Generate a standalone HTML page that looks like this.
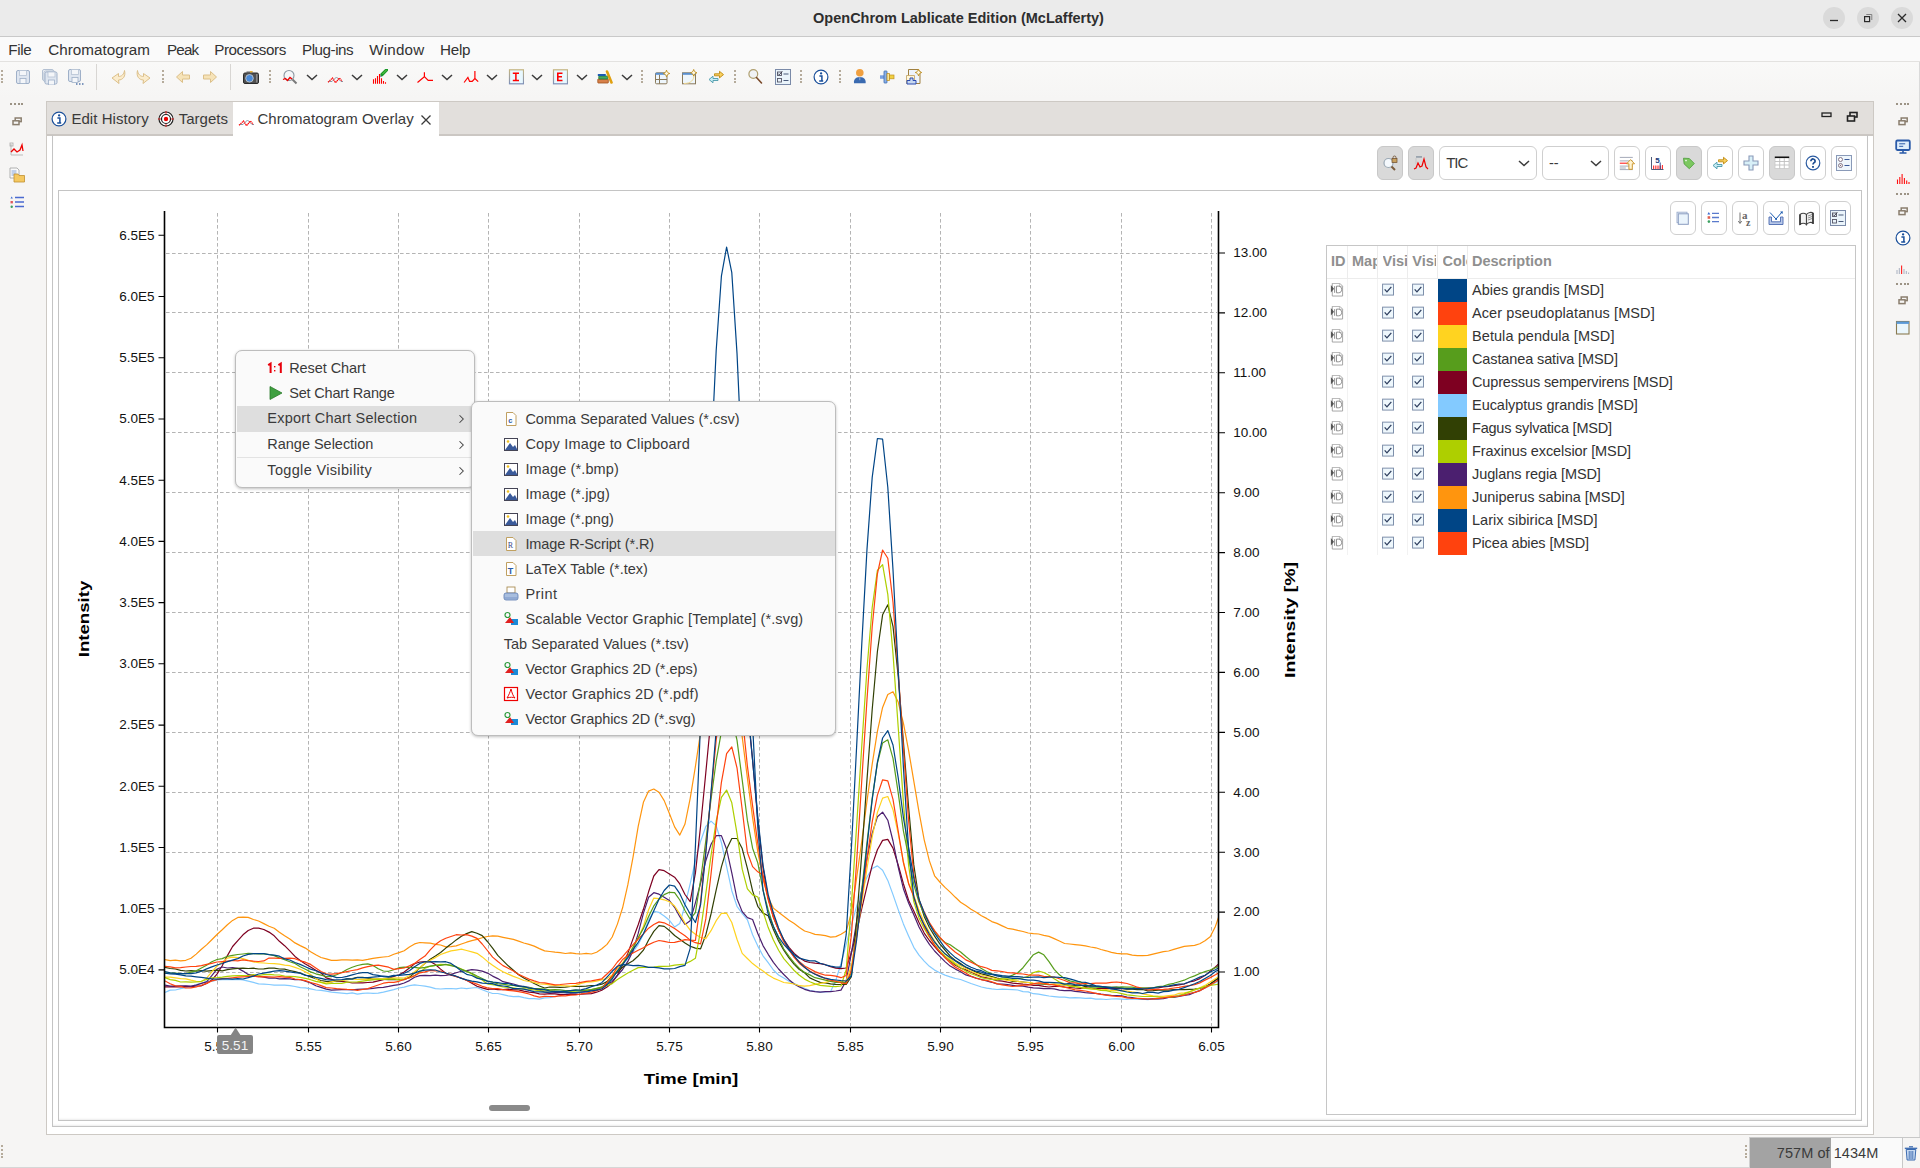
<!DOCTYPE html>
<html><head><meta charset="utf-8"><title>OpenChrom</title>
<style>
html,body{margin:0;padding:0}
body{width:1920px;height:1168px;position:relative;overflow:hidden;background:#f6f5f4;font-family:"Liberation Sans", sans-serif}
.t{position:absolute;white-space:pre}
</style></head><body>
<div style="position:absolute;left:0px;top:0px;width:1920px;height:36px;background:#ebebeb"></div><div style="position:absolute;left:0px;top:36px;width:1920px;height:1px;background:#c9c9c9"></div><div class="t" style="left:658.5px;width:600px;text-align:center;top:8.77px;font-size:14.5px;line-height:19px;color:#2e2e2e;font-weight:700;">OpenChrom Lablicate Edition (McLafferty)</div><div style="position:absolute;left:1823px;top:7px;width:22px;height:22px;background:#dadada;border-radius:50%"></div><div style="position:absolute;left:1857px;top:7px;width:22px;height:22px;background:#dadada;border-radius:50%"></div><div style="position:absolute;left:1891px;top:7px;width:22px;height:22px;background:#dadada;border-radius:50%"></div><svg style="position:absolute;left:1823px;top:7px" width="90" height="22" viewBox="1823 7 90 22"><path d="M1830 20.5h8" stroke="#2a2a2a" stroke-width="1.3"/><rect x="1864.6" y="16.6" width="5" height="5" fill="none" stroke="#2a2a2a" stroke-width="1.2"/><path d="M1866.3 14.5h5.5v5.5" fill="none" stroke="#777" stroke-width="0.9"/><path d="M1898 14l8 8M1906 14l-8 8" stroke="#2a2a2a" stroke-width="1.3"/></svg><div style="position:absolute;left:0px;top:37px;width:1920px;height:24px;background:#fafafa"></div><div style="position:absolute;left:0px;top:61px;width:1920px;height:1px;background:#e3e2e0"></div><div class="t" style="left:8.3px;top:40.23px;font-size:15.2px;line-height:20px;color:#333333;font-weight:400;letter-spacing:-0.323px;">File</div><div class="t" style="left:48.2px;top:40.23px;font-size:15.2px;line-height:20px;color:#333333;font-weight:400;letter-spacing:0.036px;">Chromatogram</div><div class="t" style="left:167px;top:40.23px;font-size:15.2px;line-height:20px;color:#333333;font-weight:400;letter-spacing:-0.836px;">Peak</div><div class="t" style="left:214.2px;top:40.23px;font-size:15.2px;line-height:20px;color:#333333;font-weight:400;letter-spacing:-0.432px;">Processors</div><div class="t" style="left:302px;top:40.23px;font-size:15.2px;line-height:20px;color:#333333;font-weight:400;letter-spacing:-0.464px;">Plug-ins</div><div class="t" style="left:369.2px;top:40.23px;font-size:15.2px;line-height:20px;color:#333333;font-weight:400;letter-spacing:0.190px;">Window</div><div class="t" style="left:440px;top:40.23px;font-size:15.2px;line-height:20px;color:#333333;font-weight:400;letter-spacing:-0.265px;">Help</div><div style="position:absolute;left:0px;top:62px;width:1920px;height:36px;background:linear-gradient(#f9f9f8,#f6f5f4)"></div><div style="position:absolute;left:1px;top:70.0px;width:2px;height:2px;background:#b5ab9b"></div><div style="position:absolute;left:1px;top:73.8px;width:2px;height:2px;background:#b5ab9b"></div><div style="position:absolute;left:1px;top:77.6px;width:2px;height:2px;background:#b5ab9b"></div><div style="position:absolute;left:1px;top:81.4px;width:2px;height:2px;background:#b5ab9b"></div><svg style="position:absolute;left:14.5px;top:69.0px" width="16" height="16" viewBox="0 0 16 16"><rect x="1.5" y="1.5" width="13" height="13" rx="1.5" fill="#dfe6f0" stroke="#9fb0c8" stroke-width="1"/><rect x="4.5" y="1.5" width="7" height="5" fill="#f4f6f9" stroke="#b6c2d4" stroke-width="0.8"/><rect x="5.0" y="9.5" width="6" height="5" fill="#f4f6f9" stroke="#9fb0c8" stroke-width="0.8"/></svg><svg style="position:absolute;left:41.5px;top:69.0px" width="16" height="16" viewBox="0 0 16 16"><rect x="0.5" y="0.5" width="11" height="11" rx="1.5" fill="#eef1f6" stroke="#b3c0d2"/><rect x="2" y="2" width="11" height="11" rx="1.5" fill="#eef1f6" stroke="#b3c0d2"/><rect x="3" y="3" width="12" height="12" rx="1.5" fill="#dfe6f0" stroke="#9fb0c8" stroke-width="1"/><rect x="6" y="3" width="7" height="5" fill="#f4f6f9" stroke="#b6c2d4" stroke-width="0.8"/><rect x="6.5" y="11" width="6" height="5" fill="#f4f6f9" stroke="#9fb0c8" stroke-width="0.8"/></svg><svg style="position:absolute;left:68.0px;top:69.0px" width="16" height="16" viewBox="0 0 16 16"><rect x="0.5" y="0.5" width="12" height="12" rx="1.5" fill="#dfe6f0" stroke="#9fb0c8" stroke-width="1"/><rect x="3.5" y="0.5" width="7" height="5" fill="#f4f6f9" stroke="#b6c2d4" stroke-width="0.8"/><rect x="4.0" y="8.5" width="6" height="5" fill="#f4f6f9" stroke="#9fb0c8" stroke-width="0.8"/><path d="M8 15h1.5M11 15h1.5M14 15h1.5" stroke="#5577aa" stroke-width="1.3"/></svg><div style="position:absolute;left:96px;top:64px;width:1px;height:26px;background:#d8d6d3"></div><svg style="position:absolute;left:109.5px;top:69.0px" width="16" height="16" viewBox="0 0 16 16"><path d="M14.5 1.5c1.5 5.5-1.5 9.5-6 9.5l.5 3.5-7-5.5 6.5-4.5v3c3 0 5.5-2 6-6z" fill="#fbeccc" stroke="#dcc08a" stroke-width="1"/></svg><svg style="position:absolute;left:135.5px;top:69.0px" width="16" height="16" viewBox="0 0 16 16"><path d="M1.5 1.5c-1.5 5.5 1.5 9.5 6 9.5l-.5 3.5 7-5.5-6.5-4.5v3c-3 0-5.5-2-6-6z" fill="#fbeccc" stroke="#dcc08a" stroke-width="1"/></svg><div style="position:absolute;left:162px;top:70.0px;width:2px;height:2px;background:#b5ab9b"></div><div style="position:absolute;left:162px;top:73.8px;width:2px;height:2px;background:#b5ab9b"></div><div style="position:absolute;left:162px;top:77.6px;width:2px;height:2px;background:#b5ab9b"></div><div style="position:absolute;left:162px;top:81.4px;width:2px;height:2px;background:#b5ab9b"></div><svg style="position:absolute;left:175.0px;top:69.0px" width="16" height="16" viewBox="0 0 16 16"><path d="M1.5 8l6-5.5v3.5h7v4h-7v3.5z" fill="#f6e3b8" stroke="#dcc08a" stroke-width="1"/></svg><svg style="position:absolute;left:202.0px;top:69.0px" width="16" height="16" viewBox="0 0 16 16"><path d="M14.5 8l-6-5.5v3.5h-7v4h7v3.5z" fill="#f6e3b8" stroke="#dcc08a" stroke-width="1"/></svg><div style="position:absolute;left:230px;top:64px;width:1px;height:26px;background:#d8d6d3"></div><svg style="position:absolute;left:243.0px;top:69.0px" width="16" height="16" viewBox="0 0 16 16"><rect x="0.5" y="4" width="15" height="10.5" rx="1.5" fill="#505050" stroke="#2a2a2a"/><rect x="3.5" y="2.5" width="6" height="2" fill="#606060"/><rect x="7" y="2" width="2.5" height="1.5" fill="#e8b030"/><rect x="13" y="5" width="1.5" height="8.5" fill="#8a8a8a"/><circle cx="6.5" cy="9.3" r="3.8" fill="#4a8ad8" stroke="#c0c8d0" stroke-width="0.9"/></svg><div style="position:absolute;left:269px;top:70.0px;width:2px;height:2px;background:#b5ab9b"></div><div style="position:absolute;left:269px;top:73.8px;width:2px;height:2px;background:#b5ab9b"></div><div style="position:absolute;left:269px;top:77.6px;width:2px;height:2px;background:#b5ab9b"></div><div style="position:absolute;left:269px;top:81.4px;width:2px;height:2px;background:#b5ab9b"></div><svg style="position:absolute;left:282.0px;top:69.0px" width="16" height="16" viewBox="0 0 16 16"><circle cx="7" cy="6.5" r="5" fill="#f4f6f8" stroke="#8a96a0" stroke-width="1.1"/><path d="M10.5 10.5l4 4" stroke="#7a7a7a" stroke-width="2"/><path d="M1 10.5l2.5-1 2 2 2.5-3 2 1.5" fill="none" stroke="#e00" stroke-width="1.3"/></svg><svg style="position:absolute;left:304.0px;top:69.0px" width="16" height="16" viewBox="0 0 16 16"><path d="M3 6l5 4.5 5-4.5" fill="none" stroke="#3c3c3c" stroke-width="1.5"/></svg><svg style="position:absolute;left:327.0px;top:69.0px" width="16" height="16" viewBox="0 0 16 16"><path d="M1.5 12.5h3.5l4.5-4.5 4.5 4.5h2" fill="none" stroke="#8a9aaa" stroke-width="1"/><path d="M1 13.3l4.5-4.3 3 4.7 4-4.7 2.5 3.3" fill="none" stroke="#ff0000" stroke-width="1.2" stroke-dasharray="1.4 0.6"/></svg><svg style="position:absolute;left:349.0px;top:69.0px" width="16" height="16" viewBox="0 0 16 16"><path d="M3 6l5 4.5 5-4.5" fill="none" stroke="#3c3c3c" stroke-width="1.5"/></svg><svg style="position:absolute;left:372.0px;top:69.0px" width="16" height="16" viewBox="0 0 16 16"><path d="M1.5 14.7V10.3M3.5 14.7V9.2M5.5 14.7V7M7.5 14.7V5M9.5 14.7V9.2M11.5 14.7V12M13.5 14.7V13.3" stroke="#ff0000" stroke-width="1.1"/><path d="M8.5 7.5l2-2" stroke="#2a3a6a" stroke-width="1.2"/><path d="M10 5.5l4.8-4.8" stroke="#1a9a2a" stroke-width="3.2" stroke-linecap="round"/><path d="M10.5 5l4-4" stroke="#6acf4a" stroke-width="1"/></svg><svg style="position:absolute;left:394.0px;top:69.0px" width="16" height="16" viewBox="0 0 16 16"><path d="M3 6l5 4.5 5-4.5" fill="none" stroke="#3c3c3c" stroke-width="1.5"/></svg><svg style="position:absolute;left:417.0px;top:69.0px" width="16" height="16" viewBox="0 0 16 16"><path d="M0.5 13.5L7.4 7.6V3.2M7.4 7.6l3.8 3.8H16" fill="none" stroke="#ff0000" stroke-width="1.2"/></svg><svg style="position:absolute;left:439.0px;top:69.0px" width="16" height="16" viewBox="0 0 16 16"><path d="M3 6l5 4.5 5-4.5" fill="none" stroke="#3c3c3c" stroke-width="1.5"/></svg><svg style="position:absolute;left:462.5px;top:69.0px" width="16" height="16" viewBox="0 0 16 16"><path d="M1.1 13.5l3.8-5.1 1.7 4h2.6l2.7-2.9V2.1M11.9 9.5l3.3 3.1" fill="none" stroke="#ff0000" stroke-width="1.2"/></svg><svg style="position:absolute;left:484.0px;top:69.0px" width="16" height="16" viewBox="0 0 16 16"><path d="M3 6l5 4.5 5-4.5" fill="none" stroke="#3c3c3c" stroke-width="1.5"/></svg><svg style="position:absolute;left:507.5px;top:69.0px" width="16" height="16" viewBox="0 0 16 16"><defs><linearGradient id="bx1" x1="0" y1="0" x2="0" y2="1"><stop offset="0" stop-color="#c4b480"/><stop offset="1" stop-color="#7f90b8"/></linearGradient></defs><rect x="1.5" y="0.8" width="14" height="14" fill="#e8f8ff" stroke="url(#bx1)" stroke-width="1.2"/><path d="M4.8 4.3h6.2M7.9 4.3v7.3M4.8 11.5h6.2" stroke="#ff0000" stroke-width="1.5"/></svg><svg style="position:absolute;left:529.0px;top:69.0px" width="16" height="16" viewBox="0 0 16 16"><path d="M3 6l5 4.5 5-4.5" fill="none" stroke="#3c3c3c" stroke-width="1.5"/></svg><svg style="position:absolute;left:552.0px;top:69.0px" width="16" height="16" viewBox="0 0 16 16"><defs><linearGradient id="bx2" x1="0" y1="0" x2="0" y2="1"><stop offset="0" stop-color="#c4b480"/><stop offset="1" stop-color="#7f90b8"/></linearGradient></defs><rect x="1.5" y="0.8" width="14" height="14" fill="#e8f8ff" stroke="url(#bx2)" stroke-width="1.2"/><path d="M10.5 4.2H5.8v7.3h4.7M5.8 7.8h4.2" fill="none" stroke="#ff0000" stroke-width="1.6"/></svg><svg style="position:absolute;left:574.0px;top:69.0px" width="16" height="16" viewBox="0 0 16 16"><path d="M3 6l5 4.5 5-4.5" fill="none" stroke="#3c3c3c" stroke-width="1.5"/></svg><svg style="position:absolute;left:597.0px;top:69.0px" width="16" height="16" viewBox="0 0 16 16"><rect x="0.8" y="10" width="10.5" height="4" rx="0.5" fill="#d8804a" stroke="#a0501a" stroke-width="0.8"/><rect x="1.8" y="7" width="9" height="3" rx="0.5" fill="#4aa860" stroke="#1a7a3a" stroke-width="0.8"/><rect x="0.8" y="5" width="8" height="2" rx="0.5" fill="#1a5ab0"/><path d="M10 2.5l4.5 11" stroke="#e0a010" stroke-width="2.6" stroke-linecap="round"/></svg><svg style="position:absolute;left:619.0px;top:69.0px" width="16" height="16" viewBox="0 0 16 16"><path d="M3 6l5 4.5 5-4.5" fill="none" stroke="#3c3c3c" stroke-width="1.5"/></svg><div style="position:absolute;left:640.5px;top:70.0px;width:2px;height:2px;background:#b5ab9b"></div><div style="position:absolute;left:640.5px;top:73.8px;width:2px;height:2px;background:#b5ab9b"></div><div style="position:absolute;left:640.5px;top:77.6px;width:2px;height:2px;background:#b5ab9b"></div><div style="position:absolute;left:640.5px;top:81.4px;width:2px;height:2px;background:#b5ab9b"></div><svg style="position:absolute;left:654.0px;top:69.0px" width="16" height="16" viewBox="0 0 16 16"><rect x="1.5" y="3.8" width="11.5" height="11" rx="1" fill="#eef6fc" stroke="#8a7a5a" stroke-width="1"/><rect x="1.5" y="3.8" width="11.5" height="2" fill="#5a90d0"/><path d="M1.5 10.5h11.5M5.5 5.8v9" stroke="#8a7a5a" stroke-width="1"/><path d="M12.5 1.2000000000000002c.6 2 1.4 2.8 3.2 3.3-1.8.5-2.6 1.3-3.2 3.3-.6-2-1.4-2.8-3.2-3.3 1.8-.5 2.6-1.3 3.2-3.3z" fill="#fff8e0" stroke="#c09020" stroke-width="1"/></svg><svg style="position:absolute;left:681.0px;top:69.0px" width="16" height="16" viewBox="0 0 16 16"><rect x="1.5" y="3.8" width="13" height="11" fill="#eef6fc" stroke="#8a7a5a" stroke-width="1"/><rect x="1.5" y="3.8" width="13" height="2" fill="#5a90d0"/><path d="M13 6c0 5-3 8.5-10 8.5" fill="none" stroke="#f0d890" stroke-width="1"/><path d="M12.7 0.5c.6 2 1.4 2.8 3.2 3.3-1.8.5-2.6 1.3-3.2 3.3-.6-2-1.4-2.8-3.2-3.3 1.8-.5 2.6-1.3 3.2-3.3z" fill="#fff8e0" stroke="#c09020" stroke-width="1"/></svg><svg style="position:absolute;left:708.0px;top:69.0px" width="16" height="16" viewBox="0 0 16 16"><path d="M6.5 4.8h5V2.3l4 3.3-4 3.3V6.8h-5z" fill="#f8d060" stroke="#c08a10" stroke-width="0.9"/><path d="M10 9.5H5V7.2L1 10.5l4 3.3v-2.3h5z" fill="#c8ecf4" stroke="#4a9aaa" stroke-width="0.9"/></svg><div style="position:absolute;left:734px;top:70.0px;width:2px;height:2px;background:#b5ab9b"></div><div style="position:absolute;left:734px;top:73.8px;width:2px;height:2px;background:#b5ab9b"></div><div style="position:absolute;left:734px;top:77.6px;width:2px;height:2px;background:#b5ab9b"></div><div style="position:absolute;left:734px;top:81.4px;width:2px;height:2px;background:#b5ab9b"></div><svg style="position:absolute;left:747.0px;top:69.0px" width="16" height="16" viewBox="0 0 16 16"><circle cx="6.3" cy="5" r="4.4" fill="#f0f2f4" stroke="#b0a070" stroke-width="1.2"/><path d="M9.5 8.5l5 5.5" stroke="#7a4a2a" stroke-width="1.6" stroke-linecap="round"/></svg><svg style="position:absolute;left:774.5px;top:69.0px" width="16" height="16" viewBox="0 0 16 16"><rect x="0.5" y="0.5" width="15" height="15" fill="#eaf4fb" stroke="#7a8aa8"/><rect x="2.5" y="3" width="4" height="3.5" fill="none" stroke="#556" stroke-width="0.9"/><rect x="2.5" y="9.5" width="4" height="3.5" fill="none" stroke="#556" stroke-width="0.9"/><path d="M3 4.5l1.3 1.3 3-3.5" stroke="#334" stroke-width="0.9" fill="none"/><path d="M8.5 5h5M8.5 11.5h5" stroke="#4a5a7a" stroke-width="1.1"/></svg><div style="position:absolute;left:800px;top:70.0px;width:2px;height:2px;background:#b5ab9b"></div><div style="position:absolute;left:800px;top:73.8px;width:2px;height:2px;background:#b5ab9b"></div><div style="position:absolute;left:800px;top:77.6px;width:2px;height:2px;background:#b5ab9b"></div><div style="position:absolute;left:800px;top:81.4px;width:2px;height:2px;background:#b5ab9b"></div><svg style="position:absolute;left:812.7px;top:69.0px" width="16" height="16" viewBox="0 0 16 16"><circle cx="8" cy="8" r="6.9" fill="#fff" stroke="#1a4f9a" stroke-width="1.2"/><circle cx="8.1" cy="4.4" r="1.15" fill="#1a4f9a"/><path d="M6.4 6.9h2.5v4.8M6.2 11.9h4" fill="none" stroke="#1a4f9a" stroke-width="1.5"/></svg><div style="position:absolute;left:839px;top:70.0px;width:2px;height:2px;background:#b5ab9b"></div><div style="position:absolute;left:839px;top:73.8px;width:2px;height:2px;background:#b5ab9b"></div><div style="position:absolute;left:839px;top:77.6px;width:2px;height:2px;background:#b5ab9b"></div><div style="position:absolute;left:839px;top:81.4px;width:2px;height:2px;background:#b5ab9b"></div><svg style="position:absolute;left:851.8px;top:69.0px" width="16" height="16" viewBox="0 0 16 16"><circle cx="7.8" cy="3.8" r="3.8" fill="#f0a040"/><path d="M2 14.3c-.5-3 1-6.2 5.8-6.2s6.3 3.2 5.8 6.2z" fill="#3a6ab0"/><path d="M7.8 8.2v3" stroke="#a8c0e0" stroke-width="0.8"/></svg><svg style="position:absolute;left:879.0px;top:69.0px" width="16" height="16" viewBox="0 0 16 16"><rect x="1" y="6.3" width="4" height="3.5" fill="#7aa0e0"/><rect x="5" y="2" width="3" height="12" rx="0.6" fill="#8ab0e8" stroke="#3a6ab0" stroke-width="0.8"/><path d="M8 4.5h2.5v7H8z" fill="#f8e8a0" stroke="#c09020" stroke-width="0.8"/><rect x="10.5" y="6" width="4.5" height="3.8" fill="#f0d040" stroke="#c09020" stroke-width="0.7"/></svg><svg style="position:absolute;left:906.0px;top:69.0px" width="16" height="16" viewBox="0 0 16 16"><path d="M2.5 0.5h9.5l2 2v12h-11.5z" fill="#eef4fc" stroke="#a08040" stroke-width="1"/><path d="M0.5 6.5h8v8H0.5z" fill="#fff6d8" stroke="#c0a060" stroke-width="0.8"/><path d="M1 15v-3.5h3V9h3v2.5h3V15z" fill="#c8d8f0" stroke="#2a4ab0" stroke-width="1"/><path d="M12.5 0.20000000000000018c.6 2 1.4 2.8 3.2 3.3-1.8.5-2.6 1.3-3.2 3.3-.6-2-1.4-2.8-3.2-3.3 1.8-.5 2.6-1.3 3.2-3.3z" fill="#fff8e0" stroke="#c09020" stroke-width="1"/></svg><div style="position:absolute;left:10.0px;top:103px;width:2px;height:2px;background:#9c9385"></div><div style="position:absolute;left:13.8px;top:103px;width:2px;height:2px;background:#9c9385"></div><div style="position:absolute;left:17.6px;top:103px;width:2px;height:2px;background:#9c9385"></div><div style="position:absolute;left:21.4px;top:103px;width:2px;height:2px;background:#9c9385"></div><svg style="position:absolute;left:9.0px;top:113.0px" width="16" height="16" viewBox="0 0 16 16"><rect x="6.2" y="5" width="6" height="3.6" fill="none" stroke="#8a7e6e" stroke-width="1.5"/><rect x="4" y="7.8" width="6" height="3.8" fill="#f6f5f4" stroke="#8a7e6e" stroke-width="1.5"/></svg><svg style="position:absolute;left:9.0px;top:141.0px" width="16" height="16" viewBox="0 0 16 16"><path d="M2 3v11h12" fill="none" stroke="#bbb" stroke-width="1"/><path d="M2 11l3-3 3 3 3-2 2-5 1 6" fill="none" stroke="#e00" stroke-width="1.3"/><rect x="1" y="2" width="3" height="3" fill="none" stroke="#aaa" stroke-width="0.8"/></svg><svg style="position:absolute;left:9.0px;top:167.0px" width="16" height="16" viewBox="0 0 16 16"><path d="M1 1h7l2 2v8H1z" fill="#fafafa" stroke="#a0a0a0" stroke-width="0.8"/><path d="M2.5 4h5M2.5 6h5M2.5 8h5" stroke="#6a8fd0" stroke-width="0.8"/><path d="M5 7h4l1 1.5h5.5V15H5z" fill="#f5c860" stroke="#c09030" stroke-width="0.8"/></svg><svg style="position:absolute;left:9.0px;top:193.5px" width="16" height="16" viewBox="0 0 16 16"><path d="M1.5 4.5l1.2-2 1.2 2z" fill="#3a6ad0"/><rect x="1.5" y="7" width="2.4" height="2.4" fill="#e05a5a"/><circle cx="2.7" cy="12.8" r="1.2" fill="#3aa060"/><path d="M6 3.5h9M6 8h9M6 12.5h9" stroke="#4a6ad0" stroke-width="1.5"/></svg><div style="position:absolute;left:1896.0px;top:103px;width:2px;height:2px;background:#9c9385"></div><div style="position:absolute;left:1899.8px;top:103px;width:2px;height:2px;background:#9c9385"></div><div style="position:absolute;left:1903.6px;top:103px;width:2px;height:2px;background:#9c9385"></div><div style="position:absolute;left:1907.4px;top:103px;width:2px;height:2px;background:#9c9385"></div><svg style="position:absolute;left:1895.0px;top:113.0px" width="16" height="16" viewBox="0 0 16 16"><rect x="6.2" y="5" width="6" height="3.6" fill="none" stroke="#8a7e6e" stroke-width="1.5"/><rect x="4" y="7.8" width="6" height="3.8" fill="#f6f5f4" stroke="#8a7e6e" stroke-width="1.5"/></svg><svg style="position:absolute;left:1895.0px;top:139.0px" width="16" height="16" viewBox="0 0 16 16"><rect x="1.2" y="1.5" width="13.6" height="9.5" rx="1.2" fill="#dfeefc" stroke="#2a5aa8" stroke-width="1.8"/><path d="M4.2 4.8h6M4.2 7.3h4" stroke="#2a5aa8" stroke-width="1"/><path d="M4.5 14h7M8 11v3" stroke="#2a5aa8" stroke-width="1.6"/></svg><svg style="position:absolute;left:1895.0px;top:169.0px" width="16" height="16" viewBox="0 0 16 16"><path d="M2.5 15v-4.5M4.8 15v-7M7.1 15v-10M9.4 15v-6M11.7 15v-3.5M14 15v-2" stroke="#ff1010" stroke-width="1.1"/></svg><div style="position:absolute;left:1896.0px;top:193px;width:2px;height:2px;background:#9c9385"></div><div style="position:absolute;left:1899.8px;top:193px;width:2px;height:2px;background:#9c9385"></div><div style="position:absolute;left:1903.6px;top:193px;width:2px;height:2px;background:#9c9385"></div><div style="position:absolute;left:1907.4px;top:193px;width:2px;height:2px;background:#9c9385"></div><svg style="position:absolute;left:1895.0px;top:203.0px" width="16" height="16" viewBox="0 0 16 16"><rect x="6.2" y="5" width="6" height="3.6" fill="none" stroke="#8a7e6e" stroke-width="1.5"/><rect x="4" y="7.8" width="6" height="3.8" fill="#f6f5f4" stroke="#8a7e6e" stroke-width="1.5"/></svg><svg style="position:absolute;left:1895.0px;top:230.0px" width="16" height="16" viewBox="0 0 16 16"><circle cx="8" cy="8" r="6.9" fill="#fff" stroke="#1a4f9a" stroke-width="1.2"/><circle cx="8.1" cy="4.4" r="1.15" fill="#1a4f9a"/><path d="M6.4 6.9h2.5v4.8M6.2 11.9h4" fill="none" stroke="#1a4f9a" stroke-width="1.5"/></svg><svg style="position:absolute;left:1895.0px;top:259.0px" width="16" height="16" viewBox="0 0 16 16"><path d="M2 15v-4M4.3 15v-6M9 15v-5M11.3 15v-3M13.6 15v-1.5" stroke="#a8b0c0" stroke-width="1"/><path d="M6.6 15V6.5" stroke="#ff2020" stroke-width="1.1"/></svg><div style="position:absolute;left:1896.0px;top:282.5px;width:2px;height:2px;background:#9c9385"></div><div style="position:absolute;left:1899.8px;top:282.5px;width:2px;height:2px;background:#9c9385"></div><div style="position:absolute;left:1903.6px;top:282.5px;width:2px;height:2px;background:#9c9385"></div><div style="position:absolute;left:1907.4px;top:282.5px;width:2px;height:2px;background:#9c9385"></div><svg style="position:absolute;left:1895.0px;top:292.0px" width="16" height="16" viewBox="0 0 16 16"><rect x="6.2" y="5" width="6" height="3.6" fill="none" stroke="#8a7e6e" stroke-width="1.5"/><rect x="4" y="7.8" width="6" height="3.8" fill="#f6f5f4" stroke="#8a7e6e" stroke-width="1.5"/></svg><svg style="position:absolute;left:1895.0px;top:319.5px" width="16" height="16" viewBox="0 0 16 16"><rect x="1.5" y="1.5" width="12.5" height="12.5" fill="#eaf6fc" stroke="#8a7a50" stroke-width="1.1"/><rect x="1.5" y="1.5" width="12.5" height="2.4" fill="#5a9ad8"/></svg><div style="position:absolute;left:1919px;top:62px;width:1px;height:1106px;background:#dadada"></div><div style="position:absolute;left:46px;top:101px;width:1828px;height:1034px;background:#ffffff;border:1px solid #cdc9c4;box-sizing:border-box"></div><div style="position:absolute;left:47px;top:102px;width:1826px;height:33px;background:#e2dfdc"></div><div style="position:absolute;left:47px;top:134px;width:1826px;height:2px;background:#cbc7c3"></div><div style="position:absolute;left:233px;top:102px;width:206px;height:34px;background:#ffffff"></div><svg style="position:absolute;left:51.0px;top:111.0px" width="16" height="16" viewBox="0 0 16 16"><circle cx="8" cy="8" r="6.9" fill="#fff" stroke="#1a4f9a" stroke-width="1.2"/><circle cx="8.1" cy="4.4" r="1.15" fill="#1a4f9a"/><path d="M6.4 6.9h2.5v4.8M6.2 11.9h4" fill="none" stroke="#1a4f9a" stroke-width="1.5"/></svg><div class="t" style="left:71.4px;top:109.10px;font-size:15px;line-height:20px;color:#3a3a3a;font-weight:400;letter-spacing:0.051px;">Edit History</div><svg style="position:absolute;left:157.8px;top:111.0px" width="16" height="16" viewBox="0 0 16 16"><circle cx="8" cy="8" r="7" fill="#fff" stroke="#222" stroke-width="1.2"/><circle cx="8" cy="8" r="4.5" fill="#fff" stroke="#222" stroke-width="1.2"/><circle cx="8" cy="8" r="2.2" fill="#e00"/><path d="M8 0v3M8 13v3M0 8h3M13 8h3" stroke="#e00" stroke-width="0.8"/></svg><div class="t" style="left:178.7px;top:109.10px;font-size:15px;line-height:20px;color:#3a3a3a;font-weight:400;letter-spacing:0.002px;">Targets</div><svg style="position:absolute;left:237.5px;top:112.0px" width="16" height="16" viewBox="0 0 16 16"><path d="M1.5 12.5h3.5l4.5-4.5 4.5 4.5h2" fill="none" stroke="#8a9aaa" stroke-width="1"/><path d="M1 13.3l4.5-4.3 3 4.7 4-4.7 2.5 3.3" fill="none" stroke="#ff0000" stroke-width="1.2" stroke-dasharray="1.4 0.6"/></svg><div class="t" style="left:257.5px;top:109.10px;font-size:15px;line-height:20px;color:#3a3a3a;font-weight:400;letter-spacing:0.016px;">Chromatogram Overlay</div><svg style="position:absolute;left:419px;top:113px" width="14" height="14" viewBox="0 0 14 14"><path d="M2.5 2.5l9 9M11.5 2.5l-9 9" stroke="#3a3a3a" stroke-width="1.3"/></svg><svg style="position:absolute;left:1818.0px;top:107.0px" width="16" height="16" viewBox="0 0 16 16"><rect x="4" y="6" width="9" height="3.5" fill="none" stroke="#222" stroke-width="1.3"/></svg><svg style="position:absolute;left:1844.0px;top:109.0px" width="16" height="16" viewBox="0 0 16 16"><rect x="6" y="3.5" width="7" height="4.5" fill="none" stroke="#222" stroke-width="1.6"/><rect x="3.5" y="7" width="7" height="5" fill="#e2dfdc" stroke="#222" stroke-width="1.6"/></svg><div style="position:absolute;left:52px;top:135px;width:1816px;height:992px;border:1px solid #c4c4c4;border-top:none;box-sizing:border-box;box-shadow:inset 0 -2px 2px -1px rgba(0,0,0,0.08)"></div><div style="position:absolute;left:58px;top:190px;width:1804px;height:931px;border:1px solid #c4c4c4;box-sizing:border-box;box-shadow:inset 0 -2px 2px -1px rgba(0,0,0,0.08)"></div><div style="position:absolute;left:1377px;top:146px;width:26px;height:34px;background:#d9d9d9;border:1px solid #c8c8c8;border-radius:6px;box-sizing:border-box"></div><svg style="position:absolute;left:1382.0px;top:155.0px" width="16" height="16" viewBox="0 0 16 16"><circle cx="6.5" cy="8" r="4.5" fill="#f4f8fc" stroke="#9aa8b4" stroke-width="1.2"/><path d="M9.5 11.5l3.5 3.5" stroke="#7a5a3a" stroke-width="2"/><rect x="10" y="3.5" width="5" height="4" fill="#c8a060" stroke="#6a4a2a" stroke-width="0.7"/><path d="M11 3.5v-1a1.5 1.5 0 013 0v1" fill="none" stroke="#6a4a2a" stroke-width="0.8"/></svg><div style="position:absolute;left:1408px;top:146px;width:26px;height:34px;background:#d9d9d9;border:1px solid #c8c8c8;border-radius:6px;box-sizing:border-box"></div><svg style="position:absolute;left:1413.0px;top:155.0px" width="16" height="16" viewBox="0 0 16 16"><rect x="3" y="1" width="6" height="1.8" fill="#9aa4ae"/><path d="M1 14l2-1 2-5 2 4 2-1 2-7 2 8 2 2" fill="none" stroke="#e00" stroke-width="1.2"/><path d="M3 3v6" stroke="#bbb" stroke-width="0.6"/></svg><div style="position:absolute;left:1439px;top:146px;width:98px;height:34px;background:#ffffff;border:1px solid #cfcfcf;border-radius:6px;box-sizing:border-box"></div><div class="t" style="left:1446.2px;top:153.30px;font-size:15px;line-height:20px;color:#3a3a3a;font-weight:400;letter-spacing:-1.054px;">TIC</div><svg style="position:absolute;left:1516.0px;top:155.0px" width="16" height="16" viewBox="0 0 16 16"><path d="M3 6l5 4.5 5-4.5" fill="none" stroke="#3c3c3c" stroke-width="1.5"/></svg><div style="position:absolute;left:1542px;top:146px;width:67px;height:34px;background:#ffffff;border:1px solid #cfcfcf;border-radius:6px;box-sizing:border-box"></div><div class="t" style="left:1549px;top:154.17px;font-size:14.5px;line-height:19px;color:#3a3a3a;font-weight:400;">--</div><svg style="position:absolute;left:1588.0px;top:155.0px" width="16" height="16" viewBox="0 0 16 16"><path d="M3 6l5 4.5 5-4.5" fill="none" stroke="#3c3c3c" stroke-width="1.5"/></svg><div style="position:absolute;left:1614px;top:146px;width:26px;height:34px;background:#ffffff;border:1px solid #cfcfcf;border-radius:6px;box-sizing:border-box"></div><svg style="position:absolute;left:1619.0px;top:155.0px" width="16" height="16" viewBox="0 0 16 16"><path d="M0.8 2.4h13M0.8 5.9h13M0.8 11.1h13M0.8 13h6M0.8 14.6h13" stroke="#9aa0b0" stroke-width="0.9"/><path d="M0.8 8.2h8" stroke="#ff2020" stroke-width="1.1"/><path d="M11.6 4.6l4 4.2h-2.3v5.5h-3.4V8.8H7.6z" fill="#fff3d0" stroke="#c89020" stroke-width="0.9"/></svg><div style="position:absolute;left:1645px;top:146px;width:26px;height:34px;background:#ffffff;border:1px solid #cfcfcf;border-radius:6px;box-sizing:border-box"></div><svg style="position:absolute;left:1650.0px;top:155.0px" width="16" height="16" viewBox="0 0 16 16"><path d="M1.5 2v12.5h12" fill="none" stroke="#3a4a6a" stroke-width="0.9"/><path d="M3.5 14V10.5M5.3 14V10.5M7.1 14V10.5M8.9 14V10.5M10.7 14V10.5M12.5 14V10" stroke="#ff2020" stroke-width="0.9"/><path d="M10.2 14V7.5" stroke="#1a3a8a" stroke-width="0.9"/><text x="5.2" y="8.3" font-size="8" font-weight="700" font-family="Liberation Sans" fill="#1a3a7a">5</text></svg><div style="position:absolute;left:1676px;top:146px;width:26px;height:34px;background:#d9d9d9;border:1px solid #c8c8c8;border-radius:6px;box-sizing:border-box"></div><svg style="position:absolute;left:1681.0px;top:155.0px" width="16" height="16" viewBox="0 0 16 16"><path d="M2.5 3.2l5.8 0.3 5 5-5 5.2-5.2-4.8z" fill="#7cc860" stroke="#4a9a3a" stroke-width="0.8"/><circle cx="5" cy="5.6" r="0.8" fill="#fff"/></svg><div style="position:absolute;left:1707px;top:146px;width:26px;height:34px;background:#ffffff;border:1px solid #cfcfcf;border-radius:6px;box-sizing:border-box"></div><svg style="position:absolute;left:1712.0px;top:155.0px" width="16" height="16" viewBox="0 0 16 16"><path d="M6.5 4.8h5V2.3l4 3.3-4 3.3V6.8h-5z" fill="#f8d060" stroke="#c08a10" stroke-width="0.9"/><path d="M10 9.5H5V7.2L1 10.5l4 3.3v-2.3h5z" fill="#c8ecf4" stroke="#4a9aaa" stroke-width="0.9"/></svg><div style="position:absolute;left:1738px;top:146px;width:26px;height:34px;background:#ffffff;border:1px solid #cfcfcf;border-radius:6px;box-sizing:border-box"></div><svg style="position:absolute;left:1743.0px;top:155.0px" width="16" height="16" viewBox="0 0 16 16"><path d="M6 1h4v5h5v4h-5v5H6v-5H1V6h5z" fill="#d8f0f8" stroke="#8a9ab8" stroke-width="1.1"/></svg><div style="position:absolute;left:1769px;top:146px;width:26px;height:34px;background:#d9d9d9;border:1px solid #c8c8c8;border-radius:6px;box-sizing:border-box"></div><svg style="position:absolute;left:1774.0px;top:155.0px" width="16" height="16" viewBox="0 0 16 16"><rect x="1" y="2.5" width="14" height="11" fill="#fff" stroke="#c8c8c8" stroke-width="0.8"/><rect x="0.8" y="1.5" width="14.4" height="1.6" fill="#111"/><path d="M1 6.5h14M1 10h14M5.7 3v10.5M10.3 3v10.5" stroke="#c0c0c0" stroke-width="0.9"/></svg><div style="position:absolute;left:1800px;top:146px;width:26px;height:34px;background:#ffffff;border:1px solid #cfcfcf;border-radius:6px;box-sizing:border-box"></div><svg style="position:absolute;left:1805.0px;top:155.0px" width="16" height="16" viewBox="0 0 16 16"><circle cx="8" cy="8" r="6.8" fill="#fff" stroke="#2a5aa0" stroke-width="1.2"/><path d="M5.9 6.2a2.1 2.1 0 114.1.5c-.3 1-2 1.2-2 2.8" fill="none" stroke="#1a4a90" stroke-width="1.7"/><rect x="7.1" y="11" width="1.8" height="1.8" fill="#1a4a90"/></svg><div style="position:absolute;left:1831px;top:146px;width:26px;height:34px;background:#ffffff;border:1px solid #cfcfcf;border-radius:6px;box-sizing:border-box"></div><svg style="position:absolute;left:1836.0px;top:155.0px" width="16" height="16" viewBox="0 0 16 16"><rect x="0.5" y="0.5" width="15" height="15" fill="#eef6fc" stroke="#8a9ab8"/><circle cx="4.5" cy="4.5" r="2" fill="#fff" stroke="#7a6a7a" stroke-width="0.9"/><circle cx="4.5" cy="10.5" r="2" fill="#fff" stroke="#7a6a7a" stroke-width="0.9"/><circle cx="4.5" cy="10.5" r="0.7" fill="#7a6a7a"/><path d="M8.5 4.5h5M8.5 10.5h5" stroke="#3a5a9a" stroke-width="1"/></svg><div style="position:absolute;left:1670px;top:201px;width:26px;height:34px;background:#ffffff;border:1px solid #cfcfcf;border-radius:6px;box-sizing:border-box"></div><svg style="position:absolute;left:1675.0px;top:210.0px" width="16" height="16" viewBox="0 0 16 16"><rect x="2" y="2.2" width="10" height="10.5" fill="#f0f6fc" stroke="#9aaccc" stroke-width="0.9"/><rect x="3.3" y="3.8" width="10" height="10.5" fill="#eaf4fc" stroke="#8a9cc0" stroke-width="1"/></svg><div style="position:absolute;left:1701px;top:201px;width:26px;height:34px;background:#ffffff;border:1px solid #cfcfcf;border-radius:6px;box-sizing:border-box"></div><svg style="position:absolute;left:1706.0px;top:210.0px" width="16" height="16" viewBox="0 0 16 16"><path d="M2.8 2l1.5 2.6H1.3z" fill="#3a6ad0"/><rect x="1.6" y="6.2" width="2.6" height="2.6" fill="#e06050"/><circle cx="2.9" cy="11.6" r="1.3" fill="#3aa060"/><path d="M6 3.4h7M6 7.5h7M6 11.6h7" stroke="#5a7acc" stroke-width="1.3"/></svg><div style="position:absolute;left:1732px;top:201px;width:26px;height:34px;background:#ffffff;border:1px solid #cfcfcf;border-radius:6px;box-sizing:border-box"></div><svg style="position:absolute;left:1737.0px;top:210.0px" width="16" height="16" viewBox="0 0 16 16"><path d="M3 2.5v10.5M1.3 11l1.7 2.5 1.7-2.5" fill="none" stroke="#666" stroke-width="0.9"/><text x="5" y="8.5" font-size="11" font-weight="700" font-family="Liberation Serif" fill="#666">a</text><text x="9" y="15.5" font-size="10" font-weight="700" font-family="Liberation Serif" fill="#666">z</text></svg><div style="position:absolute;left:1763px;top:201px;width:26px;height:34px;background:#ffffff;border:1px solid #cfcfcf;border-radius:6px;box-sizing:border-box"></div><svg style="position:absolute;left:1768.0px;top:210.0px" width="16" height="16" viewBox="0 0 16 16"><path d="M1 7v7.5h14V7h-2.5v4.8h-9V7z" fill="#b8c8e8" stroke="#4a6ab0" stroke-width="0.9"/><path d="M2 2.5l6 6.5 6-7" fill="none" stroke="#1a5ab0" stroke-width="1"/><path d="M6.8 9.8L9 10l-.3-2.2zM14.8 1.2l-.3 2.8-2.5-2.3z" fill="#1a5ab0"/></svg><div style="position:absolute;left:1794px;top:201px;width:26px;height:34px;background:#ffffff;border:1px solid #cfcfcf;border-radius:6px;box-sizing:border-box"></div><svg style="position:absolute;left:1799.0px;top:210.0px" width="16" height="16" viewBox="0 0 16 16"><path d="M1 4.5c2-1.5 4.5-1.5 6.5 0v10c-2-1.5-4.5-1.5-6.5 0z" fill="#f4f4f4" stroke="#444" stroke-width="1.1"/><path d="M7.5 4.5c2-2.5 5-2.5 6.5-1.5v10c-1.5-1-4.5-1-6.5 1.5z" fill="#f4f4f4" stroke="#444" stroke-width="1.1"/><path d="M9 6l4-1.5M9 8l4-1.5M9 10l4-1.5" stroke="#666" stroke-width="0.7"/><path d="M1 4.5v10.5M14 3v11" stroke="#333" stroke-width="1.5"/></svg><div style="position:absolute;left:1825px;top:201px;width:26px;height:34px;background:#ffffff;border:1px solid #cfcfcf;border-radius:6px;box-sizing:border-box"></div><svg style="position:absolute;left:1830.0px;top:210.0px" width="16" height="16" viewBox="0 0 16 16"><rect x="0.5" y="0.5" width="15" height="15" fill="#eaf4fb" stroke="#7a8aa8"/><rect x="2.5" y="3" width="4" height="3.5" fill="none" stroke="#556" stroke-width="0.9"/><rect x="2.5" y="9.5" width="4" height="3.5" fill="none" stroke="#556" stroke-width="0.9"/><path d="M3 4.5l1.3 1.3 3-3.5" stroke="#334" stroke-width="0.9" fill="none"/><path d="M8.5 5h5M8.5 11.5h5" stroke="#4a5a7a" stroke-width="1.1"/></svg><div style="position:absolute;left:1326px;top:245px;width:530px;height:870px;border:1px solid #c6c6c6;box-sizing:border-box;background:#fff"></div><div style="position:absolute;left:1327px;top:278px;width:528px;height:1px;background:#ececec"></div><div style="position:absolute;left:1347px;top:246px;width:1px;height:32px;background:#ececec"></div><div style="position:absolute;left:1377px;top:246px;width:1px;height:32px;background:#ececec"></div><div style="position:absolute;left:1407px;top:246px;width:1px;height:32px;background:#ececec"></div><div style="position:absolute;left:1437px;top:246px;width:1px;height:32px;background:#ececec"></div><div style="position:absolute;left:1467px;top:246px;width:1px;height:32px;background:#ececec"></div><div style="position:absolute;left:1347px;top:279px;width:1px;height:276px;background:#f2f2f2"></div><div style="position:absolute;left:1377px;top:279px;width:1px;height:276px;background:#f2f2f2"></div><div style="position:absolute;left:1407px;top:279px;width:1px;height:276px;background:#f2f2f2"></div><div style="position:absolute;left:1327px;top:246px;width:528px;height:32px;overflow:hidden"><div style="position:absolute;left:4px;top:0;width:16px;height:32px;overflow:hidden"><div class="t" style="left:0;top:6.27px;font-size:14.5px;line-height:19px;color:#8f8f8f;font-weight:700">ID</div></div><div style="position:absolute;left:25px;top:0;width:25px;height:32px;overflow:hidden"><div class="t" style="left:0;top:6.27px;font-size:14.5px;line-height:19px;color:#8f8f8f;font-weight:700">Map</div></div><div style="position:absolute;left:55.5px;top:0;width:24px;height:32px;overflow:hidden"><div class="t" style="left:0;top:6.27px;font-size:14.5px;line-height:19px;color:#8f8f8f;font-weight:700">Visi</div></div><div style="position:absolute;left:85.29999999999995px;top:0;width:24px;height:32px;overflow:hidden"><div class="t" style="left:0;top:6.27px;font-size:14.5px;line-height:19px;color:#8f8f8f;font-weight:700">Visi</div></div><div style="position:absolute;left:115.5px;top:0;width:24px;height:32px;overflow:hidden"><div class="t" style="left:0;top:6.27px;font-size:14.5px;line-height:19px;color:#8f8f8f;font-weight:700">Colo</div></div><div style="position:absolute;left:145px;top:0;width:200px;height:32px;overflow:hidden"><div class="t" style="left:0;top:6.27px;font-size:14.5px;line-height:19px;color:#8f8f8f;font-weight:700">Description</div></div></div><div style="position:absolute;left:1438px;top:279px;width:29px;height:23px;background:#004586"></div><svg style="position:absolute;left:1330.0px;top:282.7px" width="14" height="14" viewBox="0 0 16 16"><path d="M2.6 0.3h8.5l3.3 3.3v11.3H2.6z" fill="#fff" stroke="#9a9a9a" stroke-width="1"/><path d="M10.8 0.5v3.3h3.4" fill="none" stroke="#b0b0b0" stroke-width="0.8"/><path d="M1 2.3l3.6 4.3L1 10.9z" fill="#555"/><path d="M5.3 3.6v7.6" stroke="#8a8a8a" stroke-width="1.1"/><path d="M7.4 3.6h2.3c2.6 0 3.6 1.6 3.6 3.8s-1 3.8-3.6 3.8H7.4z" fill="none" stroke="#8a8a8a" stroke-width="1.1"/></svg><svg style="position:absolute;left:1381.0px;top:282.7px" width="14" height="14" viewBox="0 0 16 16"><rect x="1.8" y="1.3" width="12.5" height="12.5" fill="#eef7fc" stroke="#7a8ca8" stroke-width="1.1"/><path d="M4.2 7.3l2.6 2.8 5-5.6" fill="none" stroke="#2e3e5e" stroke-width="1.5"/></svg><svg style="position:absolute;left:1411.0px;top:282.7px" width="14" height="14" viewBox="0 0 16 16"><rect x="1.8" y="1.3" width="12.5" height="12.5" fill="#eef7fc" stroke="#7a8ca8" stroke-width="1.1"/><path d="M4.2 7.3l2.6 2.8 5-5.6" fill="none" stroke="#2e3e5e" stroke-width="1.5"/></svg><div class="t" style="left:1472px;top:281.47px;font-size:14.5px;line-height:19px;color:#333333;font-weight:400;letter-spacing:-0.003px;">Abies grandis [MSD]</div><div style="position:absolute;left:1438px;top:302px;width:29px;height:23px;background:#ff420e"></div><svg style="position:absolute;left:1330.0px;top:305.7px" width="14" height="14" viewBox="0 0 16 16"><path d="M2.6 0.3h8.5l3.3 3.3v11.3H2.6z" fill="#fff" stroke="#9a9a9a" stroke-width="1"/><path d="M10.8 0.5v3.3h3.4" fill="none" stroke="#b0b0b0" stroke-width="0.8"/><path d="M1 2.3l3.6 4.3L1 10.9z" fill="#555"/><path d="M5.3 3.6v7.6" stroke="#8a8a8a" stroke-width="1.1"/><path d="M7.4 3.6h2.3c2.6 0 3.6 1.6 3.6 3.8s-1 3.8-3.6 3.8H7.4z" fill="none" stroke="#8a8a8a" stroke-width="1.1"/></svg><svg style="position:absolute;left:1381.0px;top:305.7px" width="14" height="14" viewBox="0 0 16 16"><rect x="1.8" y="1.3" width="12.5" height="12.5" fill="#eef7fc" stroke="#7a8ca8" stroke-width="1.1"/><path d="M4.2 7.3l2.6 2.8 5-5.6" fill="none" stroke="#2e3e5e" stroke-width="1.5"/></svg><svg style="position:absolute;left:1411.0px;top:305.7px" width="14" height="14" viewBox="0 0 16 16"><rect x="1.8" y="1.3" width="12.5" height="12.5" fill="#eef7fc" stroke="#7a8ca8" stroke-width="1.1"/><path d="M4.2 7.3l2.6 2.8 5-5.6" fill="none" stroke="#2e3e5e" stroke-width="1.5"/></svg><div class="t" style="left:1472px;top:304.47px;font-size:14.5px;line-height:19px;color:#333333;font-weight:400;letter-spacing:0.090px;">Acer pseudoplatanus [MSD]</div><div style="position:absolute;left:1438px;top:325px;width:29px;height:23px;background:#ffd320"></div><svg style="position:absolute;left:1330.0px;top:328.7px" width="14" height="14" viewBox="0 0 16 16"><path d="M2.6 0.3h8.5l3.3 3.3v11.3H2.6z" fill="#fff" stroke="#9a9a9a" stroke-width="1"/><path d="M10.8 0.5v3.3h3.4" fill="none" stroke="#b0b0b0" stroke-width="0.8"/><path d="M1 2.3l3.6 4.3L1 10.9z" fill="#555"/><path d="M5.3 3.6v7.6" stroke="#8a8a8a" stroke-width="1.1"/><path d="M7.4 3.6h2.3c2.6 0 3.6 1.6 3.6 3.8s-1 3.8-3.6 3.8H7.4z" fill="none" stroke="#8a8a8a" stroke-width="1.1"/></svg><svg style="position:absolute;left:1381.0px;top:328.7px" width="14" height="14" viewBox="0 0 16 16"><rect x="1.8" y="1.3" width="12.5" height="12.5" fill="#eef7fc" stroke="#7a8ca8" stroke-width="1.1"/><path d="M4.2 7.3l2.6 2.8 5-5.6" fill="none" stroke="#2e3e5e" stroke-width="1.5"/></svg><svg style="position:absolute;left:1411.0px;top:328.7px" width="14" height="14" viewBox="0 0 16 16"><rect x="1.8" y="1.3" width="12.5" height="12.5" fill="#eef7fc" stroke="#7a8ca8" stroke-width="1.1"/><path d="M4.2 7.3l2.6 2.8 5-5.6" fill="none" stroke="#2e3e5e" stroke-width="1.5"/></svg><div class="t" style="left:1472px;top:327.47px;font-size:14.5px;line-height:19px;color:#333333;font-weight:400;letter-spacing:0.072px;">Betula pendula [MSD]</div><div style="position:absolute;left:1438px;top:348px;width:29px;height:23px;background:#579d1c"></div><svg style="position:absolute;left:1330.0px;top:351.7px" width="14" height="14" viewBox="0 0 16 16"><path d="M2.6 0.3h8.5l3.3 3.3v11.3H2.6z" fill="#fff" stroke="#9a9a9a" stroke-width="1"/><path d="M10.8 0.5v3.3h3.4" fill="none" stroke="#b0b0b0" stroke-width="0.8"/><path d="M1 2.3l3.6 4.3L1 10.9z" fill="#555"/><path d="M5.3 3.6v7.6" stroke="#8a8a8a" stroke-width="1.1"/><path d="M7.4 3.6h2.3c2.6 0 3.6 1.6 3.6 3.8s-1 3.8-3.6 3.8H7.4z" fill="none" stroke="#8a8a8a" stroke-width="1.1"/></svg><svg style="position:absolute;left:1381.0px;top:351.7px" width="14" height="14" viewBox="0 0 16 16"><rect x="1.8" y="1.3" width="12.5" height="12.5" fill="#eef7fc" stroke="#7a8ca8" stroke-width="1.1"/><path d="M4.2 7.3l2.6 2.8 5-5.6" fill="none" stroke="#2e3e5e" stroke-width="1.5"/></svg><svg style="position:absolute;left:1411.0px;top:351.7px" width="14" height="14" viewBox="0 0 16 16"><rect x="1.8" y="1.3" width="12.5" height="12.5" fill="#eef7fc" stroke="#7a8ca8" stroke-width="1.1"/><path d="M4.2 7.3l2.6 2.8 5-5.6" fill="none" stroke="#2e3e5e" stroke-width="1.5"/></svg><div class="t" style="left:1472px;top:350.47px;font-size:14.5px;line-height:19px;color:#333333;font-weight:400;letter-spacing:-0.118px;">Castanea sativa [MSD]</div><div style="position:absolute;left:1438px;top:371px;width:29px;height:23px;background:#7e0021"></div><svg style="position:absolute;left:1330.0px;top:374.7px" width="14" height="14" viewBox="0 0 16 16"><path d="M2.6 0.3h8.5l3.3 3.3v11.3H2.6z" fill="#fff" stroke="#9a9a9a" stroke-width="1"/><path d="M10.8 0.5v3.3h3.4" fill="none" stroke="#b0b0b0" stroke-width="0.8"/><path d="M1 2.3l3.6 4.3L1 10.9z" fill="#555"/><path d="M5.3 3.6v7.6" stroke="#8a8a8a" stroke-width="1.1"/><path d="M7.4 3.6h2.3c2.6 0 3.6 1.6 3.6 3.8s-1 3.8-3.6 3.8H7.4z" fill="none" stroke="#8a8a8a" stroke-width="1.1"/></svg><svg style="position:absolute;left:1381.0px;top:374.7px" width="14" height="14" viewBox="0 0 16 16"><rect x="1.8" y="1.3" width="12.5" height="12.5" fill="#eef7fc" stroke="#7a8ca8" stroke-width="1.1"/><path d="M4.2 7.3l2.6 2.8 5-5.6" fill="none" stroke="#2e3e5e" stroke-width="1.5"/></svg><svg style="position:absolute;left:1411.0px;top:374.7px" width="14" height="14" viewBox="0 0 16 16"><rect x="1.8" y="1.3" width="12.5" height="12.5" fill="#eef7fc" stroke="#7a8ca8" stroke-width="1.1"/><path d="M4.2 7.3l2.6 2.8 5-5.6" fill="none" stroke="#2e3e5e" stroke-width="1.5"/></svg><div class="t" style="left:1472px;top:373.47px;font-size:14.5px;line-height:19px;color:#333333;font-weight:400;letter-spacing:-0.145px;">Cupressus sempervirens [MSD]</div><div style="position:absolute;left:1438px;top:394px;width:29px;height:23px;background:#83caff"></div><svg style="position:absolute;left:1330.0px;top:397.7px" width="14" height="14" viewBox="0 0 16 16"><path d="M2.6 0.3h8.5l3.3 3.3v11.3H2.6z" fill="#fff" stroke="#9a9a9a" stroke-width="1"/><path d="M10.8 0.5v3.3h3.4" fill="none" stroke="#b0b0b0" stroke-width="0.8"/><path d="M1 2.3l3.6 4.3L1 10.9z" fill="#555"/><path d="M5.3 3.6v7.6" stroke="#8a8a8a" stroke-width="1.1"/><path d="M7.4 3.6h2.3c2.6 0 3.6 1.6 3.6 3.8s-1 3.8-3.6 3.8H7.4z" fill="none" stroke="#8a8a8a" stroke-width="1.1"/></svg><svg style="position:absolute;left:1381.0px;top:397.7px" width="14" height="14" viewBox="0 0 16 16"><rect x="1.8" y="1.3" width="12.5" height="12.5" fill="#eef7fc" stroke="#7a8ca8" stroke-width="1.1"/><path d="M4.2 7.3l2.6 2.8 5-5.6" fill="none" stroke="#2e3e5e" stroke-width="1.5"/></svg><svg style="position:absolute;left:1411.0px;top:397.7px" width="14" height="14" viewBox="0 0 16 16"><rect x="1.8" y="1.3" width="12.5" height="12.5" fill="#eef7fc" stroke="#7a8ca8" stroke-width="1.1"/><path d="M4.2 7.3l2.6 2.8 5-5.6" fill="none" stroke="#2e3e5e" stroke-width="1.5"/></svg><div class="t" style="left:1472px;top:396.47px;font-size:14.5px;line-height:19px;color:#333333;font-weight:400;letter-spacing:-0.042px;">Eucalyptus grandis [MSD]</div><div style="position:absolute;left:1438px;top:417px;width:29px;height:23px;background:#314004"></div><svg style="position:absolute;left:1330.0px;top:420.7px" width="14" height="14" viewBox="0 0 16 16"><path d="M2.6 0.3h8.5l3.3 3.3v11.3H2.6z" fill="#fff" stroke="#9a9a9a" stroke-width="1"/><path d="M10.8 0.5v3.3h3.4" fill="none" stroke="#b0b0b0" stroke-width="0.8"/><path d="M1 2.3l3.6 4.3L1 10.9z" fill="#555"/><path d="M5.3 3.6v7.6" stroke="#8a8a8a" stroke-width="1.1"/><path d="M7.4 3.6h2.3c2.6 0 3.6 1.6 3.6 3.8s-1 3.8-3.6 3.8H7.4z" fill="none" stroke="#8a8a8a" stroke-width="1.1"/></svg><svg style="position:absolute;left:1381.0px;top:420.7px" width="14" height="14" viewBox="0 0 16 16"><rect x="1.8" y="1.3" width="12.5" height="12.5" fill="#eef7fc" stroke="#7a8ca8" stroke-width="1.1"/><path d="M4.2 7.3l2.6 2.8 5-5.6" fill="none" stroke="#2e3e5e" stroke-width="1.5"/></svg><svg style="position:absolute;left:1411.0px;top:420.7px" width="14" height="14" viewBox="0 0 16 16"><rect x="1.8" y="1.3" width="12.5" height="12.5" fill="#eef7fc" stroke="#7a8ca8" stroke-width="1.1"/><path d="M4.2 7.3l2.6 2.8 5-5.6" fill="none" stroke="#2e3e5e" stroke-width="1.5"/></svg><div class="t" style="left:1472px;top:419.47px;font-size:14.5px;line-height:19px;color:#333333;font-weight:400;letter-spacing:-0.211px;">Fagus sylvatica [MSD]</div><div style="position:absolute;left:1438px;top:440px;width:29px;height:23px;background:#aecf00"></div><svg style="position:absolute;left:1330.0px;top:443.7px" width="14" height="14" viewBox="0 0 16 16"><path d="M2.6 0.3h8.5l3.3 3.3v11.3H2.6z" fill="#fff" stroke="#9a9a9a" stroke-width="1"/><path d="M10.8 0.5v3.3h3.4" fill="none" stroke="#b0b0b0" stroke-width="0.8"/><path d="M1 2.3l3.6 4.3L1 10.9z" fill="#555"/><path d="M5.3 3.6v7.6" stroke="#8a8a8a" stroke-width="1.1"/><path d="M7.4 3.6h2.3c2.6 0 3.6 1.6 3.6 3.8s-1 3.8-3.6 3.8H7.4z" fill="none" stroke="#8a8a8a" stroke-width="1.1"/></svg><svg style="position:absolute;left:1381.0px;top:443.7px" width="14" height="14" viewBox="0 0 16 16"><rect x="1.8" y="1.3" width="12.5" height="12.5" fill="#eef7fc" stroke="#7a8ca8" stroke-width="1.1"/><path d="M4.2 7.3l2.6 2.8 5-5.6" fill="none" stroke="#2e3e5e" stroke-width="1.5"/></svg><svg style="position:absolute;left:1411.0px;top:443.7px" width="14" height="14" viewBox="0 0 16 16"><rect x="1.8" y="1.3" width="12.5" height="12.5" fill="#eef7fc" stroke="#7a8ca8" stroke-width="1.1"/><path d="M4.2 7.3l2.6 2.8 5-5.6" fill="none" stroke="#2e3e5e" stroke-width="1.5"/></svg><div class="t" style="left:1472px;top:442.47px;font-size:14.5px;line-height:19px;color:#333333;font-weight:400;letter-spacing:-0.090px;">Fraxinus excelsior [MSD]</div><div style="position:absolute;left:1438px;top:463px;width:29px;height:23px;background:#4b1f6f"></div><svg style="position:absolute;left:1330.0px;top:466.7px" width="14" height="14" viewBox="0 0 16 16"><path d="M2.6 0.3h8.5l3.3 3.3v11.3H2.6z" fill="#fff" stroke="#9a9a9a" stroke-width="1"/><path d="M10.8 0.5v3.3h3.4" fill="none" stroke="#b0b0b0" stroke-width="0.8"/><path d="M1 2.3l3.6 4.3L1 10.9z" fill="#555"/><path d="M5.3 3.6v7.6" stroke="#8a8a8a" stroke-width="1.1"/><path d="M7.4 3.6h2.3c2.6 0 3.6 1.6 3.6 3.8s-1 3.8-3.6 3.8H7.4z" fill="none" stroke="#8a8a8a" stroke-width="1.1"/></svg><svg style="position:absolute;left:1381.0px;top:466.7px" width="14" height="14" viewBox="0 0 16 16"><rect x="1.8" y="1.3" width="12.5" height="12.5" fill="#eef7fc" stroke="#7a8ca8" stroke-width="1.1"/><path d="M4.2 7.3l2.6 2.8 5-5.6" fill="none" stroke="#2e3e5e" stroke-width="1.5"/></svg><svg style="position:absolute;left:1411.0px;top:466.7px" width="14" height="14" viewBox="0 0 16 16"><rect x="1.8" y="1.3" width="12.5" height="12.5" fill="#eef7fc" stroke="#7a8ca8" stroke-width="1.1"/><path d="M4.2 7.3l2.6 2.8 5-5.6" fill="none" stroke="#2e3e5e" stroke-width="1.5"/></svg><div class="t" style="left:1472px;top:465.47px;font-size:14.5px;line-height:19px;color:#333333;font-weight:400;letter-spacing:-0.092px;">Juglans regia [MSD]</div><div style="position:absolute;left:1438px;top:486px;width:29px;height:23px;background:#ff950e"></div><svg style="position:absolute;left:1330.0px;top:489.7px" width="14" height="14" viewBox="0 0 16 16"><path d="M2.6 0.3h8.5l3.3 3.3v11.3H2.6z" fill="#fff" stroke="#9a9a9a" stroke-width="1"/><path d="M10.8 0.5v3.3h3.4" fill="none" stroke="#b0b0b0" stroke-width="0.8"/><path d="M1 2.3l3.6 4.3L1 10.9z" fill="#555"/><path d="M5.3 3.6v7.6" stroke="#8a8a8a" stroke-width="1.1"/><path d="M7.4 3.6h2.3c2.6 0 3.6 1.6 3.6 3.8s-1 3.8-3.6 3.8H7.4z" fill="none" stroke="#8a8a8a" stroke-width="1.1"/></svg><svg style="position:absolute;left:1381.0px;top:489.7px" width="14" height="14" viewBox="0 0 16 16"><rect x="1.8" y="1.3" width="12.5" height="12.5" fill="#eef7fc" stroke="#7a8ca8" stroke-width="1.1"/><path d="M4.2 7.3l2.6 2.8 5-5.6" fill="none" stroke="#2e3e5e" stroke-width="1.5"/></svg><svg style="position:absolute;left:1411.0px;top:489.7px" width="14" height="14" viewBox="0 0 16 16"><rect x="1.8" y="1.3" width="12.5" height="12.5" fill="#eef7fc" stroke="#7a8ca8" stroke-width="1.1"/><path d="M4.2 7.3l2.6 2.8 5-5.6" fill="none" stroke="#2e3e5e" stroke-width="1.5"/></svg><div class="t" style="left:1472px;top:488.47px;font-size:14.5px;line-height:19px;color:#333333;font-weight:400;letter-spacing:-0.056px;">Juniperus sabina [MSD]</div><div style="position:absolute;left:1438px;top:509px;width:29px;height:23px;background:#004586"></div><svg style="position:absolute;left:1330.0px;top:512.7px" width="14" height="14" viewBox="0 0 16 16"><path d="M2.6 0.3h8.5l3.3 3.3v11.3H2.6z" fill="#fff" stroke="#9a9a9a" stroke-width="1"/><path d="M10.8 0.5v3.3h3.4" fill="none" stroke="#b0b0b0" stroke-width="0.8"/><path d="M1 2.3l3.6 4.3L1 10.9z" fill="#555"/><path d="M5.3 3.6v7.6" stroke="#8a8a8a" stroke-width="1.1"/><path d="M7.4 3.6h2.3c2.6 0 3.6 1.6 3.6 3.8s-1 3.8-3.6 3.8H7.4z" fill="none" stroke="#8a8a8a" stroke-width="1.1"/></svg><svg style="position:absolute;left:1381.0px;top:512.7px" width="14" height="14" viewBox="0 0 16 16"><rect x="1.8" y="1.3" width="12.5" height="12.5" fill="#eef7fc" stroke="#7a8ca8" stroke-width="1.1"/><path d="M4.2 7.3l2.6 2.8 5-5.6" fill="none" stroke="#2e3e5e" stroke-width="1.5"/></svg><svg style="position:absolute;left:1411.0px;top:512.7px" width="14" height="14" viewBox="0 0 16 16"><rect x="1.8" y="1.3" width="12.5" height="12.5" fill="#eef7fc" stroke="#7a8ca8" stroke-width="1.1"/><path d="M4.2 7.3l2.6 2.8 5-5.6" fill="none" stroke="#2e3e5e" stroke-width="1.5"/></svg><div class="t" style="left:1472px;top:511.47px;font-size:14.5px;line-height:19px;color:#333333;font-weight:400;letter-spacing:0.031px;">Larix sibirica [MSD]</div><div style="position:absolute;left:1438px;top:532px;width:29px;height:23px;background:#ff420e"></div><svg style="position:absolute;left:1330.0px;top:535.7px" width="14" height="14" viewBox="0 0 16 16"><path d="M2.6 0.3h8.5l3.3 3.3v11.3H2.6z" fill="#fff" stroke="#9a9a9a" stroke-width="1"/><path d="M10.8 0.5v3.3h3.4" fill="none" stroke="#b0b0b0" stroke-width="0.8"/><path d="M1 2.3l3.6 4.3L1 10.9z" fill="#555"/><path d="M5.3 3.6v7.6" stroke="#8a8a8a" stroke-width="1.1"/><path d="M7.4 3.6h2.3c2.6 0 3.6 1.6 3.6 3.8s-1 3.8-3.6 3.8H7.4z" fill="none" stroke="#8a8a8a" stroke-width="1.1"/></svg><svg style="position:absolute;left:1381.0px;top:535.7px" width="14" height="14" viewBox="0 0 16 16"><rect x="1.8" y="1.3" width="12.5" height="12.5" fill="#eef7fc" stroke="#7a8ca8" stroke-width="1.1"/><path d="M4.2 7.3l2.6 2.8 5-5.6" fill="none" stroke="#2e3e5e" stroke-width="1.5"/></svg><svg style="position:absolute;left:1411.0px;top:535.7px" width="14" height="14" viewBox="0 0 16 16"><rect x="1.8" y="1.3" width="12.5" height="12.5" fill="#eef7fc" stroke="#7a8ca8" stroke-width="1.1"/><path d="M4.2 7.3l2.6 2.8 5-5.6" fill="none" stroke="#2e3e5e" stroke-width="1.5"/></svg><div class="t" style="left:1472px;top:534.47px;font-size:14.5px;line-height:19px;color:#333333;font-weight:400;letter-spacing:-0.134px;">Picea abies [MSD]</div><svg style="position:absolute;left:0;top:0" width="1920" height="1168" viewBox="0 0 1920 1168"><defs><clipPath id="pc"><rect x="165" y="212" width="1053" height="815"/></clipPath></defs><path d="M217.5 213V1026 M308.5 213V1026 M398.5 213V1026 M488.5 213V1026 M579.5 213V1026 M669.5 213V1026 M759.5 213V1026 M850.5 213V1026 M940.5 213V1026 M1030.5 213V1026 M1121.5 213V1026 M1211.5 213V1026 M166 253.5H1217 M166 312.5H1217 M166 372.5H1217 M166 432.5H1217 M166 492.5H1217 M166 552.5H1217 M166 612.5H1217 M166 672.5H1217 M166 732.5H1217 M166 792.5H1217 M166 852.5H1217 M166 912.5H1217 M166 972.5H1217" stroke="#b4b4b4" stroke-width="1" stroke-dasharray="3.6 2.4" fill="none"/><g clip-path="url(#pc)" fill="none" stroke-width="1.2" stroke-linejoin="round"><path d="M165.0,992.4 L170.2,990.1 L175.4,990.0 L180.6,988.6 L185.8,987.6 L191.0,986.5 L196.2,984.5 L201.4,983.3 L206.6,981.4 L211.8,981.4 L217.0,979.9 L222.2,979.7 L227.4,979.7 L232.6,979.6 L237.8,979.5 L243.0,979.9 L248.2,981.2 L253.4,982.4 L258.6,983.9 L263.8,984.1 L269.0,984.5 L274.2,985.2 L279.4,985.2 L284.6,985.2 L289.8,985.7 L295.0,986.5 L300.2,987.6 L305.4,987.8 L310.6,988.8 L315.8,990.0 L321.0,990.3 L326.2,991.2 L331.4,992.2 L336.6,992.7 L341.8,993.1 L347.0,993.7 L352.2,992.9 L357.4,994.1 L362.6,993.4 L367.8,993.0 L373.0,993.3 L378.2,993.1 L383.4,992.2 L388.6,990.9 L393.8,989.6 L399.0,988.0 L404.2,987.2 L409.4,985.7 L414.6,984.8 L419.8,985.5 L425.0,986.1 L430.2,987.1 L435.4,988.6 L440.6,989.0 L445.8,988.7 L451.0,988.5 L456.2,988.8 L461.4,988.0 L466.6,988.6 L471.8,988.0 L477.0,987.5 L482.2,989.8 L487.4,991.7 L492.6,993.5 L497.8,993.5 L503.0,994.6 L508.2,995.8 L513.4,996.6 L518.6,996.4 L523.8,997.7 L529.0,998.6 L534.2,998.6 L539.4,999.1 L544.6,997.8 L549.8,997.6 L555.0,996.5 L560.2,996.0 L565.4,994.0 L570.6,992.5 L575.8,991.2 L581.0,991.6 L586.2,990.7 L591.4,989.9 L596.6,989.0 L601.8,987.1 L607.0,982.9 L612.2,977.0 L617.4,970.6 L622.6,965.2 L627.8,958.3 L633.0,952.0 L638.2,944.6 L643.4,934.2 L648.6,919.8 L653.8,911.4 L659.0,912.4 L664.2,916.0 L669.4,920.3 L674.6,927.0 L679.8,923.4 L685.0,905.1 L690.2,883.7 L695.4,861.0 L700.6,841.2 L705.8,826.5 L711.0,821.1 L716.2,825.9 L721.4,842.5 L726.6,866.7 L731.8,890.7 L737.0,906.3 L742.2,913.4 L747.4,919.8 L752.6,934.7 L757.8,946.1 L763.0,955.8 L768.2,962.7 L773.4,970.0 L778.6,975.0 L783.8,978.1 L789.0,981.2 L794.2,983.6 L799.4,986.0 L804.6,988.2 L809.8,990.6 L815.0,991.3 L820.2,992.2 L825.4,991.9 L830.6,991.4 L835.8,980.4 L841.0,963.5 L846.2,944.1 L851.4,925.1 L856.6,906.3 L861.8,890.3 L867.0,877.0 L872.2,868.5 L877.4,865.9 L882.6,870.3 L887.8,880.4 L893.0,894.6 L898.2,909.6 L903.4,923.9 L908.6,935.9 L913.8,947.3 L919.0,955.2 L924.2,961.1 L929.4,966.3 L934.6,970.1 L939.8,972.7 L945.0,975.1 L950.2,976.9 L955.4,978.5 L960.6,979.5 L965.8,981.5 L971.0,983.5 L976.2,985.2 L981.4,987.0 L986.6,988.1 L991.8,988.9 L997.0,989.5 L1002.2,989.2 L1007.4,989.3 L1012.6,989.6 L1017.8,990.0 L1023.0,991.6 L1028.2,991.9 L1033.4,993.7 L1038.6,994.2 L1043.8,995.1 L1049.0,996.0 L1054.2,996.6 L1059.4,997.1 L1064.6,997.2 L1069.8,997.9 L1075.0,997.6 L1080.2,997.9 L1085.4,998.4 L1090.6,998.2 L1095.8,999.2 L1101.0,999.0 L1106.2,999.5 L1111.4,999.0 L1116.6,998.9 L1121.8,999.2 L1127.0,999.4 L1132.2,999.0 L1137.4,999.3 L1142.6,999.2 L1147.8,999.7 L1153.0,998.9 L1158.2,999.1 L1163.4,998.1 L1168.6,997.3 L1173.8,996.4 L1179.0,995.2 L1184.2,994.5 L1189.4,993.6 L1194.6,992.0 L1199.8,990.2 L1205.0,988.3 L1210.2,985.4 L1215.4,982.6 L1220.6,979.7" stroke="#83caff"/><path d="M165.0,959.6 L170.2,960.7 L175.4,960.1 L180.6,960.8 L185.8,960.3 L191.0,958.3 L196.2,954.1 L201.4,949.3 L206.6,944.9 L211.8,939.8 L217.0,934.5 L222.2,929.8 L227.4,924.8 L232.6,920.4 L237.8,917.4 L243.0,917.1 L248.2,917.4 L253.4,919.5 L258.6,921.0 L263.8,923.6 L269.0,926.2 L274.2,928.2 L279.4,932.3 L284.6,935.8 L289.8,939.1 L295.0,942.9 L300.2,945.6 L305.4,948.1 L310.6,951.7 L315.8,954.8 L321.0,957.5 L326.2,958.9 L331.4,960.3 L336.6,960.3 L341.8,959.8 L347.0,959.9 L352.2,960.1 L357.4,959.9 L362.6,960.3 L367.8,959.4 L373.0,958.3 L378.2,957.7 L383.4,957.0 L388.6,956.5 L393.8,954.3 L399.0,952.6 L404.2,950.7 L409.4,946.9 L414.6,943.9 L419.8,942.5 L425.0,942.8 L430.2,943.1 L435.4,944.3 L440.6,945.0 L445.8,946.9 L451.0,946.6 L456.2,945.9 L461.4,944.0 L466.6,942.2 L471.8,940.7 L477.0,939.4 L482.2,937.7 L487.4,936.5 L492.6,935.8 L497.8,936.1 L503.0,937.3 L508.2,938.4 L513.4,939.4 L518.6,941.1 L523.8,943.0 L529.0,944.4 L534.2,946.1 L539.4,948.6 L544.6,950.9 L549.8,951.5 L555.0,952.2 L560.2,952.6 L565.4,953.5 L570.6,952.8 L575.8,953.7 L581.0,954.0 L586.2,953.4 L591.4,954.0 L596.6,952.2 L601.8,948.8 L607.0,944.4 L612.2,937.0 L617.4,924.1 L622.6,907.8 L627.8,884.9 L633.0,857.4 L638.2,826.4 L643.4,802.3 L648.6,791.1 L653.8,789.0 L659.0,792.3 L664.2,800.6 L669.4,813.5 L674.6,826.9 L679.8,835.1 L685.0,824.0 L690.2,798.3 L695.4,766.5 L700.6,732.2 L705.8,699.0 L711.0,672.4 L716.2,654.0 L721.4,645.5 L726.6,648.9 L731.8,667.0 L737.0,698.0 L742.2,736.8 L747.4,778.1 L752.6,817.9 L757.8,851.8 L763.0,878.8 L768.2,897.7 L773.4,908.1 L778.6,912.3 L783.8,916.2 L789.0,920.2 L794.2,923.6 L799.4,927.4 L804.6,931.0 L809.8,932.5 L815.0,934.4 L820.2,934.9 L825.4,935.7 L830.6,937.1 L835.8,936.6 L841.0,934.2 L846.2,931.1 L851.4,912.8 L856.6,878.2 L861.8,841.0 L867.0,801.0 L872.2,764.1 L877.4,731.4 L882.6,707.4 L887.8,694.6 L893.0,691.7 L898.2,702.1 L903.4,723.1 L908.6,750.3 L913.8,781.1 L919.0,811.8 L924.2,839.8 L929.4,860.9 L934.6,875.8 L939.8,882.0 L945.0,887.4 L950.2,892.1 L955.4,897.3 L960.6,902.2 L965.8,905.5 L971.0,909.2 L976.2,912.3 L981.4,915.8 L986.6,918.4 L991.8,921.6 L997.0,923.4 L1002.2,925.9 L1007.4,928.3 L1012.6,929.1 L1017.8,930.4 L1023.0,931.5 L1028.2,933.0 L1033.4,933.6 L1038.6,934.0 L1043.8,935.4 L1049.0,936.4 L1054.2,938.6 L1059.4,941.0 L1064.6,943.5 L1069.8,944.0 L1075.0,944.6 L1080.2,945.1 L1085.4,945.8 L1090.6,947.0 L1095.8,947.8 L1101.0,949.5 L1106.2,950.8 L1111.4,952.4 L1116.6,953.3 L1121.8,953.8 L1127.0,953.9 L1132.2,955.1 L1137.4,955.7 L1142.6,955.7 L1147.8,955.4 L1153.0,954.1 L1158.2,952.9 L1163.4,951.6 L1168.6,951.0 L1173.8,949.4 L1179.0,947.9 L1184.2,946.4 L1189.4,945.8 L1194.6,945.4 L1199.8,943.8 L1205.0,940.8 L1210.2,936.8 L1215.4,926.4 L1220.6,911.2" stroke="#ff950e"/><path d="M165.0,986.8 L170.2,986.9 L175.4,986.7 L180.6,986.8 L185.8,986.3 L191.0,986.8 L196.2,986.0 L201.4,985.8 L206.6,983.4 L211.8,980.1 L217.0,974.1 L222.2,965.8 L227.4,955.6 L232.6,946.5 L237.8,940.6 L243.0,934.8 L248.2,930.5 L253.4,928.2 L258.6,928.2 L263.8,929.5 L269.0,932.1 L274.2,935.8 L279.4,941.3 L284.6,945.7 L289.8,950.9 L295.0,956.4 L300.2,960.4 L305.4,964.0 L310.6,967.1 L315.8,970.2 L321.0,973.0 L326.2,977.8 L331.4,979.3 L336.6,981.1 L341.8,981.3 L347.0,982.0 L352.2,983.0 L357.4,982.9 L362.6,982.8 L367.8,982.5 L373.0,982.1 L378.2,980.9 L383.4,979.7 L388.6,978.5 L393.8,976.4 L399.0,974.8 L404.2,972.0 L409.4,968.1 L414.6,963.8 L419.8,962.0 L425.0,961.6 L430.2,961.5 L435.4,964.5 L440.6,969.1 L445.8,973.2 L451.0,975.2 L456.2,976.5 L461.4,978.3 L466.6,980.2 L471.8,983.2 L477.0,986.3 L482.2,987.9 L487.4,989.4 L492.6,988.9 L497.8,989.6 L503.0,989.6 L508.2,989.2 L513.4,989.9 L518.6,989.8 L523.8,991.1 L529.0,992.2 L534.2,992.6 L539.4,993.8 L544.6,994.1 L549.8,993.6 L555.0,993.8 L560.2,994.6 L565.4,994.5 L570.6,994.2 L575.8,994.4 L581.0,994.2 L586.2,993.8 L591.4,993.6 L596.6,992.2 L601.8,990.3 L607.0,987.1 L612.2,982.7 L617.4,975.1 L622.6,964.9 L627.8,953.4 L633.0,938.9 L638.2,924.7 L643.4,909.3 L648.6,891.8 L653.8,876.0 L659.0,869.7 L664.2,870.7 L669.4,873.9 L674.6,877.2 L679.8,883.9 L685.0,894.5 L690.2,901.6 L695.4,873.2 L700.6,826.0 L705.8,772.7 L711.0,718.3 L716.2,666.9 L721.4,626.5 L726.6,601.6 L731.8,596.2 L737.0,613.9 L742.2,655.1 L747.4,708.3 L752.6,759.9 L757.8,820.2 L763.0,867.4 L768.2,898.3 L773.4,917.0 L778.6,930.1 L783.8,939.7 L789.0,947.4 L794.2,953.5 L799.4,957.8 L804.6,961.1 L809.8,962.5 L815.0,963.2 L820.2,963.7 L825.4,964.7 L830.6,966.7 L835.8,968.1 L841.0,968.6 L846.2,968.0 L851.4,952.6 L856.6,931.9 L861.8,908.3 L867.0,886.3 L872.2,865.1 L877.4,849.7 L882.6,840.4 L887.8,839.4 L893.0,848.1 L898.2,865.0 L903.4,883.7 L908.6,900.3 L913.8,911.0 L919.0,922.6 L924.2,933.1 L929.4,940.5 L934.6,946.7 L939.8,952.5 L945.0,956.6 L950.2,961.0 L955.4,965.2 L960.6,968.1 L965.8,969.9 L971.0,971.9 L976.2,974.5 L981.4,976.8 L986.6,977.9 L991.8,979.2 L997.0,980.6 L1002.2,981.1 L1007.4,982.2 L1012.6,983.1 L1017.8,983.7 L1023.0,984.2 L1028.2,984.5 L1033.4,985.3 L1038.6,985.4 L1043.8,986.3 L1049.0,987.0 L1054.2,986.3 L1059.4,986.2 L1064.6,987.0 L1069.8,987.5 L1075.0,988.0 L1080.2,988.3 L1085.4,987.9 L1090.6,988.0 L1095.8,988.8 L1101.0,988.1 L1106.2,988.7 L1111.4,988.3 L1116.6,988.6 L1121.8,988.6 L1127.0,988.6 L1132.2,988.6 L1137.4,988.1 L1142.6,988.5 L1147.8,988.2 L1153.0,988.0 L1158.2,987.9 L1163.4,987.0 L1168.6,986.3 L1173.8,985.7 L1179.0,984.9 L1184.2,984.0 L1189.4,982.0 L1194.6,980.8 L1199.8,978.6 L1205.0,975.6 L1210.2,971.2 L1215.4,967.0 L1220.6,962.1" stroke="#7e0021"/><path d="M165.0,985.2 L170.2,986.1 L175.4,986.2 L180.6,985.8 L185.8,985.9 L191.0,986.2 L196.2,985.1 L201.4,983.4 L206.6,981.9 L211.8,975.7 L217.0,969.1 L222.2,967.0 L227.4,968.0 L232.6,967.5 L237.8,968.3 L243.0,971.1 L248.2,974.4 L253.4,975.4 L258.6,976.1 L263.8,977.2 L269.0,978.1 L274.2,978.0 L279.4,978.8 L284.6,978.7 L289.8,978.8 L295.0,979.7 L300.2,979.5 L305.4,981.3 L310.6,982.9 L315.8,985.7 L321.0,987.4 L326.2,989.1 L331.4,990.1 L336.6,989.8 L341.8,989.7 L347.0,989.6 L352.2,989.9 L357.4,989.3 L362.6,989.1 L367.8,989.0 L373.0,988.3 L378.2,987.7 L383.4,987.3 L388.6,986.4 L393.8,985.3 L399.0,984.6 L404.2,983.0 L409.4,980.6 L414.6,977.2 L419.8,975.6 L425.0,975.3 L430.2,975.6 L435.4,975.1 L440.6,975.6 L445.8,975.3 L451.0,974.4 L456.2,972.8 L461.4,971.2 L466.6,970.7 L471.8,969.6 L477.0,970.1 L482.2,971.1 L487.4,973.1 L492.6,976.1 L497.8,978.6 L503.0,981.7 L508.2,982.8 L513.4,984.0 L518.6,985.6 L523.8,986.9 L529.0,987.3 L534.2,989.0 L539.4,990.2 L544.6,992.0 L549.8,993.0 L555.0,992.7 L560.2,992.6 L565.4,992.3 L570.6,992.8 L575.8,992.8 L581.0,992.2 L586.2,991.4 L591.4,990.1 L596.6,989.6 L601.8,987.1 L607.0,984.4 L612.2,981.4 L617.4,975.5 L622.6,969.5 L627.8,961.4 L633.0,950.9 L638.2,933.4 L643.4,913.4 L648.6,897.2 L653.8,892.7 L659.0,894.2 L664.2,897.2 L669.4,900.5 L674.6,907.3 L679.8,916.7 L685.0,924.4 L690.2,920.7 L695.4,902.8 L700.6,883.0 L705.8,860.7 L711.0,844.4 L716.2,835.6 L721.4,835.6 L726.6,849.2 L731.8,872.8 L737.0,898.7 L742.2,911.6 L747.4,917.6 L752.6,919.5 L757.8,933.5 L763.0,945.6 L768.2,954.3 L773.4,962.3 L778.6,969.0 L783.8,974.5 L789.0,979.7 L794.2,984.0 L799.4,986.9 L804.6,989.3 L809.8,990.8 L815.0,991.6 L820.2,992.1 L825.4,991.7 L830.6,991.6 L835.8,991.0 L841.0,990.1 L846.2,980.8 L851.4,953.2 L856.6,922.1 L861.8,889.9 L867.0,858.3 L872.2,833.4 L877.4,816.8 L882.6,812.1 L887.8,820.2 L893.0,841.0 L898.2,867.0 L903.4,888.7 L908.6,903.0 L913.8,914.7 L919.0,927.0 L924.2,936.5 L929.4,944.4 L934.6,951.0 L939.8,956.3 L945.0,961.6 L950.2,966.1 L955.4,969.1 L960.6,971.7 L965.8,974.9 L971.0,976.4 L976.2,978.1 L981.4,979.5 L986.6,980.9 L991.8,982.3 L997.0,983.9 L1002.2,984.1 L1007.4,984.5 L1012.6,985.3 L1017.8,986.0 L1023.0,986.1 L1028.2,987.2 L1033.4,987.8 L1038.6,988.1 L1043.8,988.6 L1049.0,988.5 L1054.2,988.8 L1059.4,990.1 L1064.6,990.6 L1069.8,990.3 L1075.0,991.4 L1080.2,991.9 L1085.4,992.6 L1090.6,993.1 L1095.8,993.4 L1101.0,994.2 L1106.2,994.8 L1111.4,995.3 L1116.6,995.5 L1121.8,995.8 L1127.0,997.2 L1132.2,997.5 L1137.4,998.5 L1142.6,999.0 L1147.8,999.1 L1153.0,998.9 L1158.2,998.8 L1163.4,998.7 L1168.6,997.5 L1173.8,997.3 L1179.0,996.4 L1184.2,995.3 L1189.4,994.6 L1194.6,992.5 L1199.8,990.8 L1205.0,987.4 L1210.2,984.2 L1215.4,980.5 L1220.6,977.3" stroke="#4b1f6f"/><path d="M165.0,967.3 L170.2,968.5 L175.4,969.0 L180.6,970.3 L185.8,971.0 L191.0,970.6 L196.2,971.1 L201.4,970.7 L206.6,971.2 L211.8,970.6 L217.0,970.1 L222.2,970.8 L227.4,969.7 L232.6,968.8 L237.8,968.4 L243.0,968.1 L248.2,968.5 L253.4,968.2 L258.6,969.0 L263.8,968.8 L269.0,968.1 L274.2,968.2 L279.4,969.0 L284.6,969.2 L289.8,970.5 L295.0,971.7 L300.2,973.1 L305.4,975.0 L310.6,976.9 L315.8,978.8 L321.0,980.5 L326.2,981.3 L331.4,981.8 L336.6,980.9 L341.8,980.3 L347.0,978.9 L352.2,978.5 L357.4,977.3 L362.6,977.4 L367.8,978.2 L373.0,979.2 L378.2,979.1 L383.4,979.4 L388.6,979.6 L393.8,979.6 L399.0,979.3 L404.2,979.6 L409.4,977.2 L414.6,972.9 L419.8,967.9 L425.0,963.4 L430.2,959.3 L435.4,956.0 L440.6,952.5 L445.8,948.1 L451.0,944.1 L456.2,939.9 L461.4,936.3 L466.6,933.6 L471.8,931.6 L477.0,933.2 L482.2,935.6 L487.4,941.5 L492.6,948.1 L497.8,955.3 L503.0,960.6 L508.2,965.8 L513.4,970.2 L518.6,974.8 L523.8,978.0 L529.0,980.8 L534.2,983.5 L539.4,986.0 L544.6,988.0 L549.8,987.0 L555.0,987.1 L560.2,987.3 L565.4,987.2 L570.6,986.5 L575.8,986.5 L581.0,986.3 L586.2,986.1 L591.4,985.5 L596.6,985.5 L601.8,984.2 L607.0,981.6 L612.2,976.2 L617.4,972.0 L622.6,967.3 L627.8,963.7 L633.0,960.7 L638.2,956.0 L643.4,950.2 L648.6,940.0 L653.8,931.4 L659.0,925.7 L664.2,926.4 L669.4,930.5 L674.6,935.5 L679.8,939.2 L685.0,942.9 L690.2,946.3 L695.4,948.1 L700.6,948.8 L705.8,934.9 L711.0,914.0 L716.2,889.9 L721.4,866.9 L726.6,849.3 L731.8,838.5 L737.0,838.5 L742.2,848.6 L747.4,868.4 L752.6,890.9 L757.8,906.3 L763.0,913.1 L768.2,915.8 L773.4,929.6 L778.6,941.0 L783.8,950.2 L789.0,957.8 L794.2,964.3 L799.4,969.5 L804.6,972.8 L809.8,977.9 L815.0,980.2 L820.2,982.4 L825.4,982.8 L830.6,983.8 L835.8,984.3 L841.0,984.5 L846.2,984.5 L851.4,976.6 L856.6,921.2 L861.8,852.8 L867.0,779.6 L872.2,709.5 L877.4,651.5 L882.6,614.8 L887.8,604.8 L893.0,626.3 L898.2,676.1 L903.4,741.7 L908.6,807.2 L913.8,864.9 L919.0,899.5 L924.2,916.4 L929.4,927.5 L934.6,936.1 L939.8,943.9 L945.0,950.0 L950.2,956.1 L955.4,960.4 L960.6,963.6 L965.8,967.4 L971.0,969.8 L976.2,972.1 L981.4,973.9 L986.6,975.2 L991.8,976.6 L997.0,978.1 L1002.2,979.0 L1007.4,979.6 L1012.6,981.4 L1017.8,981.4 L1023.0,982.0 L1028.2,982.5 L1033.4,983.5 L1038.6,984.0 L1043.8,984.1 L1049.0,984.6 L1054.2,984.1 L1059.4,984.7 L1064.6,984.8 L1069.8,985.2 L1075.0,985.5 L1080.2,984.9 L1085.4,986.7 L1090.6,985.7 L1095.8,986.3 L1101.0,986.7 L1106.2,987.1 L1111.4,987.4 L1116.6,987.0 L1121.8,988.1 L1127.0,989.2 L1132.2,989.2 L1137.4,989.6 L1142.6,989.5 L1147.8,990.8 L1153.0,990.6 L1158.2,990.1 L1163.4,990.2 L1168.6,990.1 L1173.8,989.7 L1179.0,989.7 L1184.2,989.6 L1189.4,989.4 L1194.6,989.2 L1199.8,988.4 L1205.0,986.8 L1210.2,984.1 L1215.4,980.1 L1220.6,976.3" stroke="#314004"/><path d="M165.0,977.2 L170.2,977.1 L175.4,977.8 L180.6,978.6 L185.8,978.8 L191.0,980.2 L196.2,981.4 L201.4,981.6 L206.6,978.2 L211.8,971.9 L217.0,966.0 L222.2,962.3 L227.4,958.1 L232.6,957.1 L237.8,957.5 L243.0,958.6 L248.2,960.3 L253.4,961.9 L258.6,962.7 L263.8,963.0 L269.0,963.5 L274.2,963.7 L279.4,964.2 L284.6,965.1 L289.8,965.7 L295.0,967.4 L300.2,969.3 L305.4,971.9 L310.6,974.6 L315.8,978.4 L321.0,982.2 L326.2,983.1 L331.4,981.9 L336.6,980.7 L341.8,980.4 L347.0,979.8 L352.2,979.0 L357.4,979.5 L362.6,979.1 L367.8,979.3 L373.0,978.8 L378.2,978.9 L383.4,978.6 L388.6,978.1 L393.8,978.2 L399.0,977.9 L404.2,978.0 L409.4,975.7 L414.6,971.8 L419.8,967.7 L425.0,963.3 L430.2,960.2 L435.4,957.6 L440.6,954.5 L445.8,952.6 L451.0,950.9 L456.2,950.1 L461.4,949.2 L466.6,950.5 L471.8,951.9 L477.0,953.3 L482.2,956.9 L487.4,961.4 L492.6,965.2 L497.8,968.8 L503.0,971.7 L508.2,974.1 L513.4,976.4 L518.6,978.2 L523.8,980.5 L529.0,981.5 L534.2,982.4 L539.4,983.8 L544.6,984.1 L549.8,984.9 L555.0,985.5 L560.2,985.5 L565.4,985.8 L570.6,986.1 L575.8,985.4 L581.0,983.5 L586.2,982.2 L591.4,982.0 L596.6,981.2 L601.8,979.8 L607.0,978.6 L612.2,974.9 L617.4,968.6 L622.6,962.8 L627.8,955.6 L633.0,947.6 L638.2,937.9 L643.4,926.2 L648.6,909.8 L653.8,898.1 L659.0,898.6 L664.2,899.8 L669.4,901.7 L674.6,906.0 L679.8,913.9 L685.0,923.1 L690.2,930.2 L695.4,934.2 L700.6,937.5 L705.8,938.6 L711.0,930.7 L716.2,920.7 L721.4,913.4 L726.6,913.2 L731.8,922.5 L737.0,939.3 L742.2,953.4 L747.4,958.5 L752.6,963.6 L757.8,967.6 L763.0,971.0 L768.2,975.0 L773.4,978.1 L778.6,980.3 L783.8,982.5 L789.0,983.2 L794.2,984.0 L799.4,985.7 L804.6,986.1 L809.8,985.6 L815.0,984.4 L820.2,983.4 L825.4,982.3 L830.6,981.1 L835.8,981.2 L841.0,981.4 L846.2,980.5 L851.4,965.7 L856.6,935.1 L861.8,902.1 L867.0,868.5 L872.2,836.8 L877.4,812.4 L882.6,798.1 L887.8,796.5 L893.0,809.7 L898.2,833.7 L903.4,861.5 L908.6,883.0 L913.8,895.5 L919.0,910.2 L924.2,922.3 L929.4,932.5 L934.6,941.1 L939.8,948.3 L945.0,953.7 L950.2,958.7 L955.4,963.2 L960.6,965.7 L965.8,968.5 L971.0,971.5 L976.2,973.4 L981.4,975.0 L986.6,976.5 L991.8,977.5 L997.0,978.8 L1002.2,979.4 L1007.4,980.5 L1012.6,980.6 L1017.8,981.3 L1023.0,982.1 L1028.2,982.4 L1033.4,983.1 L1038.6,983.3 L1043.8,983.6 L1049.0,984.1 L1054.2,984.3 L1059.4,984.4 L1064.6,985.1 L1069.8,985.8 L1075.0,986.5 L1080.2,987.3 L1085.4,988.1 L1090.6,988.6 L1095.8,989.5 L1101.0,989.8 L1106.2,989.7 L1111.4,990.5 L1116.6,990.7 L1121.8,990.5 L1127.0,991.1 L1132.2,991.9 L1137.4,992.5 L1142.6,993.9 L1147.8,994.9 L1153.0,995.9 L1158.2,996.2 L1163.4,996.3 L1168.6,995.6 L1173.8,995.2 L1179.0,993.4 L1184.2,992.8 L1189.4,991.8 L1194.6,990.1 L1199.8,987.8 L1205.0,985.4 L1210.2,982.0 L1215.4,978.7 L1220.6,975.5" stroke="#ffd320"/><path d="M165.0,977.5 L170.2,979.6 L175.4,980.4 L180.6,982.0 L185.8,981.9 L191.0,982.2 L196.2,982.0 L201.4,981.3 L206.6,979.5 L211.8,977.9 L217.0,977.7 L222.2,977.1 L227.4,976.3 L232.6,975.9 L237.8,975.7 L243.0,975.6 L248.2,975.5 L253.4,974.6 L258.6,975.5 L263.8,974.6 L269.0,974.4 L274.2,974.8 L279.4,975.0 L284.6,976.2 L289.8,976.4 L295.0,976.7 L300.2,977.4 L305.4,978.3 L310.6,979.7 L315.8,981.4 L321.0,982.3 L326.2,983.8 L331.4,983.5 L336.6,983.3 L341.8,983.3 L347.0,982.1 L352.2,982.0 L357.4,981.9 L362.6,981.1 L367.8,980.4 L373.0,979.9 L378.2,979.3 L383.4,979.4 L388.6,979.1 L393.8,978.9 L399.0,979.9 L404.2,979.2 L409.4,978.0 L414.6,975.7 L419.8,972.0 L425.0,968.2 L430.2,966.3 L435.4,965.4 L440.6,964.4 L445.8,964.7 L451.0,965.2 L456.2,966.7 L461.4,969.0 L466.6,971.2 L471.8,973.9 L477.0,977.2 L482.2,980.1 L487.4,983.9 L492.6,984.7 L497.8,985.6 L503.0,987.0 L508.2,987.3 L513.4,987.9 L518.6,988.8 L523.8,988.8 L529.0,989.1 L534.2,990.0 L539.4,990.7 L544.6,990.9 L549.8,990.7 L555.0,991.2 L560.2,991.5 L565.4,992.0 L570.6,991.5 L575.8,991.1 L581.0,990.8 L586.2,989.8 L591.4,989.5 L596.6,988.6 L601.8,986.9 L607.0,985.6 L612.2,983.6 L617.4,979.6 L622.6,976.2 L627.8,973.1 L633.0,970.2 L638.2,967.6 L643.4,967.3 L648.6,967.4 L653.8,967.0 L659.0,966.3 L664.2,966.3 L669.4,966.2 L674.6,965.2 L679.8,964.6 L685.0,964.0 L690.2,961.4 L695.4,958.3 L700.6,930.6 L705.8,893.6 L711.0,855.6 L716.2,821.0 L721.4,797.4 L726.6,790.1 L731.8,802.8 L737.0,833.4 L742.2,869.2 L747.4,888.8 L752.6,894.9 L757.8,897.0 L763.0,911.5 L768.2,927.6 L773.4,940.0 L778.6,950.3 L783.8,958.6 L789.0,964.7 L794.2,970.5 L799.4,975.2 L804.6,979.1 L809.8,981.7 L815.0,983.9 L820.2,985.3 L825.4,985.8 L830.6,986.4 L835.8,986.6 L841.0,986.0 L846.2,969.8 L851.4,904.7 L856.6,826.4 L861.8,745.5 L867.0,668.5 L872.2,607.5 L877.4,570.4 L882.6,564.6 L887.8,594.3 L893.0,653.6 L898.2,727.0 L903.4,802.5 L908.6,865.1 L913.8,901.6 L919.0,917.9 L924.2,928.4 L929.4,937.2 L934.6,944.5 L939.8,951.0 L945.0,956.2 L950.2,960.6 L955.4,964.3 L960.6,967.8 L965.8,971.1 L971.0,973.8 L976.2,975.5 L981.4,977.7 L986.6,978.6 L991.8,979.3 L997.0,979.8 L1002.2,978.8 L1007.4,978.9 L1012.6,979.3 L1017.8,978.8 L1023.0,977.8 L1028.2,976.2 L1033.4,972.6 L1038.6,971.1 L1043.8,972.5 L1049.0,975.2 L1054.2,978.8 L1059.4,982.1 L1064.6,983.7 L1069.8,986.4 L1075.0,986.6 L1080.2,987.3 L1085.4,988.4 L1090.6,988.9 L1095.8,989.1 L1101.0,990.3 L1106.2,990.7 L1111.4,991.8 L1116.6,992.5 L1121.8,993.6 L1127.0,994.8 L1132.2,995.4 L1137.4,996.0 L1142.6,996.5 L1147.8,996.5 L1153.0,996.5 L1158.2,996.8 L1163.4,997.5 L1168.6,997.1 L1173.8,996.9 L1179.0,995.6 L1184.2,993.9 L1189.4,991.9 L1194.6,989.8 L1199.8,988.1 L1205.0,986.6 L1210.2,985.4 L1215.4,984.7 L1220.6,983.8" stroke="#aecf00"/><path d="M165.0,972.8 L170.2,973.2 L175.4,973.2 L180.6,973.7 L185.8,973.7 L191.0,972.2 L196.2,970.8 L201.4,968.0 L206.6,965.3 L211.8,961.7 L217.0,959.5 L222.2,958.6 L227.4,956.4 L232.6,955.4 L237.8,954.5 L243.0,954.0 L248.2,953.4 L253.4,953.7 L258.6,953.9 L263.8,953.8 L269.0,954.5 L274.2,955.6 L279.4,957.9 L284.6,959.7 L289.8,961.8 L295.0,963.4 L300.2,966.8 L305.4,969.2 L310.6,971.9 L315.8,973.8 L321.0,975.1 L326.2,976.5 L331.4,976.6 L336.6,974.8 L341.8,972.5 L347.0,969.5 L352.2,967.3 L357.4,965.5 L362.6,964.4 L367.8,963.9 L373.0,965.4 L378.2,968.8 L383.4,971.0 L388.6,971.3 L393.8,969.7 L399.0,967.7 L404.2,967.1 L409.4,967.5 L414.6,967.3 L419.8,968.1 L425.0,967.3 L430.2,966.2 L435.4,965.4 L440.6,965.3 L445.8,964.3 L451.0,965.6 L456.2,967.0 L461.4,969.4 L466.6,971.4 L471.8,973.2 L477.0,976.0 L482.2,978.5 L487.4,981.1 L492.6,982.2 L497.8,983.9 L503.0,984.2 L508.2,985.2 L513.4,985.5 L518.6,986.4 L523.8,987.1 L529.0,987.7 L534.2,988.5 L539.4,988.6 L544.6,989.0 L549.8,989.9 L555.0,989.7 L560.2,989.9 L565.4,990.6 L570.6,990.7 L575.8,989.8 L581.0,990.5 L586.2,990.5 L591.4,989.7 L596.6,988.3 L601.8,987.4 L607.0,982.9 L612.2,977.4 L617.4,970.9 L622.6,964.1 L627.8,956.3 L633.0,947.4 L638.2,937.7 L643.4,928.4 L648.6,916.4 L653.8,905.9 L659.0,899.0 L664.2,894.6 L669.4,892.3 L674.6,892.6 L679.8,900.0 L685.0,910.5 L690.2,919.2 L695.4,912.7 L700.6,880.0 L705.8,840.8 L711.0,799.5 L716.2,760.9 L721.4,731.7 L726.6,716.4 L731.8,717.7 L737.0,740.2 L742.2,779.9 L747.4,820.4 L752.6,848.2 L757.8,862.9 L763.0,889.8 L768.2,910.0 L773.4,926.4 L778.6,938.4 L783.8,949.0 L789.0,956.4 L794.2,962.9 L799.4,968.4 L804.6,972.4 L809.8,974.9 L815.0,977.7 L820.2,978.8 L825.4,980.2 L830.6,981.4 L835.8,982.4 L841.0,982.3 L846.2,982.7 L851.4,972.7 L856.6,934.2 L861.8,889.4 L867.0,842.6 L872.2,798.1 L877.4,763.3 L882.6,742.9 L887.8,739.8 L893.0,758.3 L898.2,792.8 L903.4,830.8 L908.6,856.9 L913.8,884.6 L919.0,902.3 L924.2,914.3 L929.4,923.7 L934.6,931.4 L939.8,938.0 L945.0,942.5 L950.2,944.8 L955.4,948.5 L960.6,952.0 L965.8,956.5 L971.0,960.6 L976.2,964.5 L981.4,968.6 L986.6,971.6 L991.8,973.7 L997.0,975.5 L1002.2,976.8 L1007.4,977.2 L1012.6,975.1 L1017.8,972.8 L1023.0,967.7 L1028.2,961.2 L1033.4,954.7 L1038.6,952.1 L1043.8,954.8 L1049.0,961.7 L1054.2,969.3 L1059.4,974.8 L1064.6,978.8 L1069.8,980.9 L1075.0,982.0 L1080.2,981.7 L1085.4,984.6 L1090.6,987.1 L1095.8,987.1 L1101.0,987.5 L1106.2,987.4 L1111.4,987.3 L1116.6,987.4 L1121.8,986.9 L1127.0,987.1 L1132.2,987.2 L1137.4,988.3 L1142.6,987.9 L1147.8,988.1 L1153.0,987.8 L1158.2,986.7 L1163.4,986.0 L1168.6,984.4 L1173.8,983.3 L1179.0,981.7 L1184.2,980.2 L1189.4,977.7 L1194.6,975.9 L1199.8,973.5 L1205.0,971.6 L1210.2,970.0 L1215.4,967.6 L1220.6,965.8" stroke="#579d1c"/><path d="M165.0,980.9 L170.2,983.8 L175.4,985.9 L180.6,986.4 L185.8,988.0 L191.0,987.8 L196.2,987.0 L201.4,985.2 L206.6,983.4 L211.8,980.9 L217.0,979.6 L222.2,978.7 L227.4,978.3 L232.6,977.8 L237.8,977.2 L243.0,976.8 L248.2,976.5 L253.4,976.1 L258.6,976.8 L263.8,976.7 L269.0,976.8 L274.2,977.1 L279.4,976.7 L284.6,977.2 L289.8,977.3 L295.0,979.0 L300.2,979.7 L305.4,980.6 L310.6,982.5 L315.8,983.8 L321.0,985.6 L326.2,987.6 L331.4,988.0 L336.6,988.6 L341.8,989.0 L347.0,989.4 L352.2,989.5 L357.4,990.3 L362.6,989.5 L367.8,988.6 L373.0,986.7 L378.2,985.0 L383.4,983.2 L388.6,982.3 L393.8,982.4 L399.0,981.3 L404.2,979.5 L409.4,977.8 L414.6,975.6 L419.8,972.8 L425.0,971.8 L430.2,970.3 L435.4,970.8 L440.6,971.0 L445.8,973.3 L451.0,974.3 L456.2,976.7 L461.4,978.0 L466.6,980.5 L471.8,982.3 L477.0,984.1 L482.2,986.3 L487.4,987.8 L492.6,988.5 L497.8,988.7 L503.0,989.7 L508.2,990.4 L513.4,990.8 L518.6,991.6 L523.8,992.7 L529.0,994.0 L534.2,995.9 L539.4,997.1 L544.6,996.3 L549.8,996.5 L555.0,996.6 L560.2,995.7 L565.4,995.9 L570.6,995.1 L575.8,995.0 L581.0,994.0 L586.2,993.2 L591.4,992.1 L596.6,990.7 L601.8,988.6 L607.0,982.5 L612.2,975.8 L617.4,966.7 L622.6,959.5 L627.8,955.6 L633.0,953.0 L638.2,950.2 L643.4,947.7 L648.6,944.6 L653.8,942.2 L659.0,940.5 L664.2,941.3 L669.4,942.5 L674.6,942.3 L679.8,941.1 L685.0,939.6 L690.2,940.2 L695.4,942.7 L700.6,943.9 L705.8,918.9 L711.0,874.2 L716.2,826.3 L721.4,782.3 L726.6,753.7 L731.8,746.9 L737.0,767.8 L742.2,809.5 L747.4,852.5 L752.6,866.6 L757.8,871.8 L763.0,875.0 L768.2,896.9 L773.4,915.1 L778.6,929.8 L783.8,941.4 L789.0,949.9 L794.2,957.4 L799.4,963.4 L804.6,967.4 L809.8,971.0 L815.0,973.9 L820.2,976.1 L825.4,978.6 L830.6,980.3 L835.8,981.2 L841.0,982.8 L846.2,983.6 L851.4,970.2 L856.6,936.9 L861.8,897.8 L867.0,858.6 L872.2,821.8 L877.4,795.1 L882.6,779.8 L887.8,780.8 L893.0,799.4 L898.2,831.0 L903.4,862.7 L908.6,883.7 L913.8,896.7 L919.0,913.4 L924.2,926.1 L929.4,936.1 L934.6,945.3 L939.8,951.8 L945.0,957.8 L950.2,962.7 L955.4,967.3 L960.6,970.1 L965.8,973.0 L971.0,976.2 L976.2,978.2 L981.4,979.8 L986.6,980.3 L991.8,981.9 L997.0,983.6 L1002.2,984.9 L1007.4,985.6 L1012.6,986.5 L1017.8,985.8 L1023.0,985.1 L1028.2,985.2 L1033.4,983.9 L1038.6,982.8 L1043.8,983.1 L1049.0,984.3 L1054.2,984.9 L1059.4,986.3 L1064.6,987.1 L1069.8,988.5 L1075.0,989.8 L1080.2,990.4 L1085.4,991.0 L1090.6,992.2 L1095.8,993.3 L1101.0,994.4 L1106.2,995.2 L1111.4,995.8 L1116.6,996.5 L1121.8,996.6 L1127.0,997.8 L1132.2,998.5 L1137.4,998.4 L1142.6,998.6 L1147.8,999.0 L1153.0,998.8 L1158.2,998.4 L1163.4,997.9 L1168.6,997.1 L1173.8,996.3 L1179.0,996.0 L1184.2,995.2 L1189.4,993.5 L1194.6,992.4 L1199.8,990.6 L1205.0,987.9 L1210.2,985.0 L1215.4,982.1 L1220.6,978.5" stroke="#ff420e"/><path d="M165.0,966.3 L170.2,966.9 L175.4,967.9 L180.6,967.6 L185.8,967.0 L191.0,966.5 L196.2,966.4 L201.4,965.7 L206.6,964.4 L211.8,963.4 L217.0,962.0 L222.2,961.6 L227.4,961.1 L232.6,960.5 L237.8,960.9 L243.0,959.9 L248.2,960.7 L253.4,961.2 L258.6,961.5 L263.8,960.9 L269.0,958.0 L274.2,958.1 L279.4,958.4 L284.6,958.4 L289.8,958.2 L295.0,958.7 L300.2,960.8 L305.4,962.2 L310.6,964.4 L315.8,967.9 L321.0,971.5 L326.2,973.9 L331.4,974.1 L336.6,973.6 L341.8,972.7 L347.0,971.6 L352.2,970.5 L357.4,969.6 L362.6,967.9 L367.8,966.6 L373.0,965.7 L378.2,965.1 L383.4,966.2 L388.6,967.2 L393.8,969.4 L399.0,968.7 L404.2,968.0 L409.4,965.9 L414.6,963.4 L419.8,959.5 L425.0,956.1 L430.2,949.8 L435.4,944.6 L440.6,940.8 L445.8,938.3 L451.0,936.5 L456.2,934.7 L461.4,935.0 L466.6,934.6 L471.8,936.1 L477.0,938.4 L482.2,944.0 L487.4,950.5 L492.6,957.1 L497.8,961.5 L503.0,965.6 L508.2,968.2 L513.4,971.1 L518.6,974.4 L523.8,976.8 L529.0,979.1 L534.2,980.9 L539.4,982.5 L544.6,982.9 L549.8,983.9 L555.0,984.8 L560.2,984.5 L565.4,984.0 L570.6,983.5 L575.8,983.3 L581.0,982.3 L586.2,981.4 L591.4,980.9 L596.6,979.9 L601.8,978.8 L607.0,974.0 L612.2,969.0 L617.4,962.0 L622.6,956.6 L627.8,950.7 L633.0,944.6 L638.2,939.2 L643.4,933.8 L648.6,928.2 L653.8,924.5 L659.0,921.9 L664.2,922.8 L669.4,925.5 L674.6,928.5 L679.8,932.3 L685.0,935.8 L690.2,940.1 L695.4,940.5 L700.6,901.8 L705.8,850.6 L711.0,794.0 L716.2,740.1 L721.4,694.7 L726.6,666.1 L731.8,658.0 L737.0,674.9 L742.2,715.3 L747.4,766.2 L752.6,805.8 L757.8,843.3 L763.0,876.8 L768.2,899.8 L773.4,917.5 L778.6,930.1 L783.8,941.5 L789.0,949.6 L794.2,957.0 L799.4,961.7 L804.6,965.9 L809.8,968.8 L815.0,971.6 L820.2,973.6 L825.4,975.2 L830.6,975.3 L835.8,976.2 L841.0,977.7 L846.2,975.5 L851.4,935.1 L856.6,862.5 L861.8,780.0 L867.0,699.4 L872.2,626.8 L877.4,573.8 L882.6,550.0 L887.8,558.3 L893.0,602.2 L898.2,671.2 L903.4,748.0 L908.6,820.6 L913.8,874.5 L919.0,900.0 L924.2,912.2 L929.4,922.5 L934.6,930.6 L939.8,937.1 L945.0,943.0 L950.2,947.8 L955.4,952.3 L960.6,955.8 L965.8,959.9 L971.0,962.1 L976.2,964.8 L981.4,966.7 L986.6,968.0 L991.8,970.4 L997.0,970.8 L1002.2,971.5 L1007.4,972.6 L1012.6,972.9 L1017.8,973.7 L1023.0,974.0 L1028.2,974.9 L1033.4,975.2 L1038.6,975.2 L1043.8,976.3 L1049.0,976.6 L1054.2,977.0 L1059.4,978.8 L1064.6,980.5 L1069.8,982.6 L1075.0,982.9 L1080.2,983.9 L1085.4,983.6 L1090.6,983.7 L1095.8,983.2 L1101.0,983.1 L1106.2,983.1 L1111.4,982.4 L1116.6,982.0 L1121.8,982.7 L1127.0,983.5 L1132.2,985.2 L1137.4,987.2 L1142.6,988.5 L1147.8,989.9 L1153.0,989.6 L1158.2,989.5 L1163.4,989.4 L1168.6,988.8 L1173.8,988.0 L1179.0,987.4 L1184.2,986.4 L1189.4,985.6 L1194.6,984.6 L1199.8,982.9 L1205.0,980.1 L1210.2,977.6 L1215.4,974.8 L1220.6,971.7" stroke="#ff420e"/><path d="M165.0,971.5 L170.2,972.8 L175.4,973.3 L180.6,973.6 L185.8,973.7 L191.0,973.6 L196.2,972.9 L201.4,971.2 L206.6,968.9 L211.8,966.9 L217.0,965.0 L222.2,963.5 L227.4,961.6 L232.6,960.1 L237.8,958.6 L243.0,956.0 L248.2,954.4 L253.4,953.7 L258.6,953.6 L263.8,953.6 L269.0,954.7 L274.2,955.1 L279.4,956.2 L284.6,958.9 L289.8,960.0 L295.0,962.5 L300.2,964.4 L305.4,966.7 L310.6,969.1 L315.8,970.8 L321.0,972.8 L326.2,974.5 L331.4,975.9 L336.6,977.6 L341.8,977.5 L347.0,976.4 L352.2,974.9 L357.4,973.5 L362.6,972.7 L367.8,972.6 L373.0,974.6 L378.2,975.4 L383.4,976.7 L388.6,977.2 L393.8,975.8 L399.0,975.0 L404.2,973.2 L409.4,970.8 L414.6,966.7 L419.8,963.4 L425.0,961.8 L430.2,961.9 L435.4,961.6 L440.6,961.8 L445.8,961.7 L451.0,963.4 L456.2,967.0 L461.4,971.1 L466.6,974.3 L471.8,975.5 L477.0,978.1 L482.2,979.4 L487.4,981.1 L492.6,982.0 L497.8,982.6 L503.0,983.5 L508.2,983.5 L513.4,985.1 L518.6,986.1 L523.8,986.3 L529.0,988.1 L534.2,988.6 L539.4,989.5 L544.6,989.7 L549.8,991.0 L555.0,991.6 L560.2,992.0 L565.4,992.1 L570.6,992.7 L575.8,992.7 L581.0,992.2 L586.2,991.9 L591.4,990.8 L596.6,990.2 L601.8,989.0 L607.0,984.7 L612.2,979.0 L617.4,971.0 L622.6,964.1 L627.8,957.6 L633.0,949.6 L638.2,942.3 L643.4,933.8 L648.6,922.5 L653.8,910.7 L659.0,899.3 L664.2,890.5 L669.4,885.0 L674.6,886.2 L679.8,893.7 L685.0,904.7 L690.2,914.0 L695.4,922.5 L700.6,904.7 L705.8,853.0 L711.0,792.8 L716.2,730.4 L721.4,673.6 L726.6,631.8 L731.8,609.6 L737.0,613.3 L742.2,648.2 L747.4,704.0 L752.6,760.4 L757.8,816.7 L763.0,865.0 L768.2,894.7 L773.4,913.0 L778.6,928.0 L783.8,939.8 L789.0,948.9 L794.2,955.9 L799.4,962.4 L804.6,967.3 L809.8,971.5 L815.0,974.3 L820.2,976.6 L825.4,978.2 L830.6,979.3 L835.8,980.0 L841.0,980.7 L846.2,981.0 L851.4,976.0 L856.6,940.2 L861.8,894.9 L867.0,846.3 L872.2,799.6 L877.4,762.1 L882.6,738.0 L887.8,730.6 L893.0,745.0 L898.2,777.7 L903.4,817.6 L908.6,847.5 L913.8,878.2 L919.0,899.3 L924.2,912.7 L929.4,924.1 L934.6,933.2 L939.8,940.7 L945.0,947.8 L950.2,952.9 L955.4,957.6 L960.6,961.1 L965.8,964.6 L971.0,967.3 L976.2,969.3 L981.4,970.7 L986.6,973.0 L991.8,974.1 L997.0,974.9 L1002.2,975.7 L1007.4,976.2 L1012.6,976.7 L1017.8,976.6 L1023.0,977.1 L1028.2,977.4 L1033.4,977.1 L1038.6,976.9 L1043.8,977.6 L1049.0,977.1 L1054.2,977.0 L1059.4,977.4 L1064.6,977.6 L1069.8,978.9 L1075.0,980.4 L1080.2,982.0 L1085.4,982.3 L1090.6,983.9 L1095.8,985.8 L1101.0,986.4 L1106.2,987.4 L1111.4,988.8 L1116.6,989.6 L1121.8,990.8 L1127.0,992.0 L1132.2,992.8 L1137.4,992.7 L1142.6,993.5 L1147.8,992.3 L1153.0,992.4 L1158.2,993.1 L1163.4,991.6 L1168.6,991.4 L1173.8,990.2 L1179.0,989.3 L1184.2,987.6 L1189.4,985.8 L1194.6,983.8 L1199.8,981.5 L1205.0,978.4 L1210.2,975.5 L1215.4,971.6 L1220.6,968.7" stroke="#004586"/><path d="M165.0,973.1 L170.2,974.0 L175.4,974.1 L180.6,974.8 L185.8,975.9 L191.0,976.2 L196.2,976.8 L201.4,977.3 L206.6,978.1 L211.8,978.8 L217.0,979.1 L222.2,978.8 L227.4,978.8 L232.6,979.1 L237.8,978.6 L243.0,979.0 L248.2,977.7 L253.4,976.2 L258.6,974.0 L263.8,973.1 L269.0,972.1 L274.2,971.2 L279.4,970.6 L284.6,971.2 L289.8,971.8 L295.0,972.6 L300.2,973.2 L305.4,975.4 L310.6,975.9 L315.8,977.4 L321.0,978.4 L326.2,979.6 L331.4,980.1 L336.6,979.8 L341.8,979.7 L347.0,978.9 L352.2,979.1 L357.4,977.5 L362.6,977.6 L367.8,977.7 L373.0,977.1 L378.2,976.7 L383.4,976.0 L388.6,976.6 L393.8,975.3 L399.0,975.5 L404.2,974.9 L409.4,974.3 L414.6,973.1 L419.8,971.1 L425.0,970.1 L430.2,969.8 L435.4,970.0 L440.6,972.0 L445.8,973.0 L451.0,974.7 L456.2,976.2 L461.4,978.4 L466.6,979.9 L471.8,981.2 L477.0,981.8 L482.2,983.1 L487.4,983.3 L492.6,983.6 L497.8,985.4 L503.0,986.0 L508.2,986.7 L513.4,988.6 L518.6,988.7 L523.8,989.2 L529.0,990.4 L534.2,991.6 L539.4,991.8 L544.6,992.2 L549.8,992.1 L555.0,991.4 L560.2,991.4 L565.4,991.3 L570.6,990.7 L575.8,990.2 L581.0,989.9 L586.2,988.6 L591.4,986.6 L596.6,985.1 L601.8,982.7 L607.0,977.1 L612.2,971.3 L617.4,966.3 L622.6,964.6 L627.8,964.8 L633.0,965.6 L638.2,965.3 L643.4,966.2 L648.6,967.3 L653.8,967.3 L659.0,967.9 L664.2,968.9 L669.4,968.9 L674.6,968.5 L679.8,966.6 L685.0,965.4 L690.2,948.3 L695.4,846.5 L700.6,722.4 L705.8,588.2 L711.0,459.0 L716.2,350.3 L721.4,276.2 L726.6,247.0 L731.8,272.7 L737.0,353.1 L742.2,468.4 L747.4,599.2 L752.6,725.1 L757.8,827.4 L763.0,890.2 L768.2,914.1 L773.4,926.4 L778.6,937.0 L783.8,944.4 L789.0,950.0 L794.2,954.8 L799.4,958.2 L804.6,959.6 L809.8,960.9 L815.0,960.9 L820.2,963.2 L825.4,964.8 L830.6,966.1 L835.8,967.2 L841.0,967.2 L846.2,934.7 L851.4,847.9 L856.6,747.1 L861.8,643.6 L867.0,549.1 L872.2,477.4 L877.4,438.5 L882.6,439.2 L887.8,487.3 L893.0,569.8 L898.2,669.6 L903.4,767.1 L908.6,848.8 L913.8,896.9 L919.0,913.9 L924.2,924.9 L929.4,934.0 L934.6,942.0 L939.8,948.3 L945.0,953.8 L950.2,957.6 L955.4,961.0 L960.6,964.5 L965.8,967.0 L971.0,969.3 L976.2,971.2 L981.4,972.2 L986.6,973.9 L991.8,974.5 L997.0,975.8 L1002.2,976.9 L1007.4,977.4 L1012.6,978.3 L1017.8,978.4 L1023.0,979.3 L1028.2,980.1 L1033.4,980.2 L1038.6,980.9 L1043.8,982.4 L1049.0,982.3 L1054.2,982.5 L1059.4,982.9 L1064.6,984.2 L1069.8,983.4 L1075.0,984.6 L1080.2,985.4 L1085.4,985.4 L1090.6,986.1 L1095.8,986.0 L1101.0,986.7 L1106.2,987.2 L1111.4,987.6 L1116.6,988.0 L1121.8,988.3 L1127.0,988.9 L1132.2,988.7 L1137.4,988.7 L1142.6,988.8 L1147.8,988.6 L1153.0,987.8 L1158.2,987.0 L1163.4,986.5 L1168.6,986.1 L1173.8,984.9 L1179.0,984.0 L1184.2,983.8 L1189.4,981.8 L1194.6,979.5 L1199.8,977.1 L1205.0,975.3 L1210.2,972.0 L1215.4,969.7 L1220.6,966.6" stroke="#004586"/></g><path d="M164.5 211V1027.5H1218.5V211" stroke="#000" stroke-width="1.6" fill="none"/><path d="M158.5 235.3H164 M158.5 296.5H164 M158.5 357.7H164 M158.5 419.0H164 M158.5 480.2H164 M158.5 541.4H164 M158.5 602.6H164 M158.5 663.8H164 M158.5 725.1H164 M158.5 786.3H164 M158.5 847.5H164 M158.5 908.7H164 M158.5 969.9H164 M217.5 1027V1032.5 M308.5 1027V1032.5 M398.5 1027V1032.5 M488.5 1027V1032.5 M579.5 1027V1032.5 M669.5 1027V1032.5 M759.5 1027V1032.5 M850.5 1027V1032.5 M940.5 1027V1032.5 M1030.5 1027V1032.5 M1121.5 1027V1032.5 M1211.5 1027V1032.5 M1219 253.0H1225 M1219 312.9H1225 M1219 372.8H1225 M1219 432.8H1225 M1219 492.7H1225 M1219 552.6H1225 M1219 612.5H1225 M1219 672.4H1225 M1219 732.4H1225 M1219 792.3H1225 M1219 852.2H1225 M1219 912.1H1225 M1219 972.0H1225" stroke="#000" stroke-width="1.1"/></svg><div class="t" style="right:1765.5px;top:226.62px;font-size:13.5px;line-height:18px;color:#111;font-weight:400;">6.5E5</div><div class="t" style="right:1765.5px;top:287.84px;font-size:13.5px;line-height:18px;color:#111;font-weight:400;">6.0E5</div><div class="t" style="right:1765.5px;top:349.06px;font-size:13.5px;line-height:18px;color:#111;font-weight:400;">5.5E5</div><div class="t" style="right:1765.5px;top:410.28px;font-size:13.5px;line-height:18px;color:#111;font-weight:400;">5.0E5</div><div class="t" style="right:1765.5px;top:471.50px;font-size:13.5px;line-height:18px;color:#111;font-weight:400;">4.5E5</div><div class="t" style="right:1765.5px;top:532.72px;font-size:13.5px;line-height:18px;color:#111;font-weight:400;">4.0E5</div><div class="t" style="right:1765.5px;top:593.94px;font-size:13.5px;line-height:18px;color:#111;font-weight:400;">3.5E5</div><div class="t" style="right:1765.5px;top:655.16px;font-size:13.5px;line-height:18px;color:#111;font-weight:400;">3.0E5</div><div class="t" style="right:1765.5px;top:716.38px;font-size:13.5px;line-height:18px;color:#111;font-weight:400;">2.5E5</div><div class="t" style="right:1765.5px;top:777.60px;font-size:13.5px;line-height:18px;color:#111;font-weight:400;">2.0E5</div><div class="t" style="right:1765.5px;top:838.82px;font-size:13.5px;line-height:18px;color:#111;font-weight:400;">1.5E5</div><div class="t" style="right:1765.5px;top:900.04px;font-size:13.5px;line-height:18px;color:#111;font-weight:400;">1.0E5</div><div class="t" style="right:1765.5px;top:961.26px;font-size:13.5px;line-height:18px;color:#111;font-weight:400;">5.0E4</div><div class="t" style="left:1233.3px;top:244.32px;font-size:13.5px;line-height:18px;color:#111;font-weight:400;">13.00</div><div class="t" style="left:1233.3px;top:304.24px;font-size:13.5px;line-height:18px;color:#111;font-weight:400;">12.00</div><div class="t" style="left:1233.3px;top:364.16px;font-size:13.5px;line-height:18px;color:#111;font-weight:400;">11.00</div><div class="t" style="left:1233.3px;top:424.08px;font-size:13.5px;line-height:18px;color:#111;font-weight:400;">10.00</div><div class="t" style="left:1233.3px;top:484.00px;font-size:13.5px;line-height:18px;color:#111;font-weight:400;">9.00</div><div class="t" style="left:1233.3px;top:543.92px;font-size:13.5px;line-height:18px;color:#111;font-weight:400;">8.00</div><div class="t" style="left:1233.3px;top:603.84px;font-size:13.5px;line-height:18px;color:#111;font-weight:400;">7.00</div><div class="t" style="left:1233.3px;top:663.76px;font-size:13.5px;line-height:18px;color:#111;font-weight:400;">6.00</div><div class="t" style="left:1233.3px;top:723.68px;font-size:13.5px;line-height:18px;color:#111;font-weight:400;">5.00</div><div class="t" style="left:1233.3px;top:783.60px;font-size:13.5px;line-height:18px;color:#111;font-weight:400;">4.00</div><div class="t" style="left:1233.3px;top:843.52px;font-size:13.5px;line-height:18px;color:#111;font-weight:400;">3.00</div><div class="t" style="left:1233.3px;top:903.44px;font-size:13.5px;line-height:18px;color:#111;font-weight:400;">2.00</div><div class="t" style="left:1233.3px;top:963.36px;font-size:13.5px;line-height:18px;color:#111;font-weight:400;">1.00</div><div class="t" style="left:-82.5px;width:600px;text-align:center;top:1037.52px;font-size:13.5px;line-height:18px;color:#111;font-weight:400;">5.50</div><div class="t" style="left:8.5px;width:600px;text-align:center;top:1037.52px;font-size:13.5px;line-height:18px;color:#111;font-weight:400;">5.55</div><div class="t" style="left:98.5px;width:600px;text-align:center;top:1037.52px;font-size:13.5px;line-height:18px;color:#111;font-weight:400;">5.60</div><div class="t" style="left:188.5px;width:600px;text-align:center;top:1037.52px;font-size:13.5px;line-height:18px;color:#111;font-weight:400;">5.65</div><div class="t" style="left:279.5px;width:600px;text-align:center;top:1037.52px;font-size:13.5px;line-height:18px;color:#111;font-weight:400;">5.70</div><div class="t" style="left:369.5px;width:600px;text-align:center;top:1037.52px;font-size:13.5px;line-height:18px;color:#111;font-weight:400;">5.75</div><div class="t" style="left:459.5px;width:600px;text-align:center;top:1037.52px;font-size:13.5px;line-height:18px;color:#111;font-weight:400;">5.80</div><div class="t" style="left:550.5px;width:600px;text-align:center;top:1037.52px;font-size:13.5px;line-height:18px;color:#111;font-weight:400;">5.85</div><div class="t" style="left:640.5px;width:600px;text-align:center;top:1037.52px;font-size:13.5px;line-height:18px;color:#111;font-weight:400;">5.90</div><div class="t" style="left:730.5px;width:600px;text-align:center;top:1037.52px;font-size:13.5px;line-height:18px;color:#111;font-weight:400;">5.95</div><div class="t" style="left:821.5px;width:600px;text-align:center;top:1037.52px;font-size:13.5px;line-height:18px;color:#111;font-weight:400;">6.00</div><div class="t" style="left:911.5px;width:600px;text-align:center;top:1037.52px;font-size:13.5px;line-height:18px;color:#111;font-weight:400;">6.05</div><div class="t" style="left:391px;width:600px;text-align:center;top:1070.15px;font-size:14px;line-height:18px;color:#000;font-weight:700;transform:scaleX(1.34);">Time [min]</div><div class="t" style="left:84.8px;top:618.8px;font-size:13.8px;line-height:18px;color:#000;font-weight:700;transform:translate(-50%,-50%) rotate(-90deg) scaleX(1.35)">Intensity</div><div class="t" style="left:1290px;top:619.5px;font-size:13.9px;line-height:18px;color:#000;font-weight:700;transform:translate(-50%,-50%) rotate(-90deg) scaleX(1.405)">Intensity [%]</div><div style="position:absolute;left:217px;top:1035px;width:36px;height:19px;background:#858585;border-radius:2px"></div><svg style="position:absolute;left:229px;top:1027px" width="14" height="9" viewBox="0 0 14 9"><path d="M6.6 0.5L1.5 8.5H11.7Z" fill="#858585"/></svg><div class="t" style="left:-65px;width:600px;text-align:center;top:1036.82px;font-size:13.5px;line-height:18px;color:#f4f4f4;font-weight:400;">5.51</div><div style="position:absolute;left:489px;top:1105px;width:41px;height:6px;background:#8a8a8a;border-radius:3px"></div><div style="position:absolute;left:235px;top:350px;width:240px;height:138px;background:#fafafa;border:1px solid #bdbdbd;border-radius:7px;box-sizing:border-box;box-shadow:0 1px 3px rgba(0,0,0,0.25)"></div><div style="position:absolute;left:237px;top:405.5px;width:234px;height:26px;background:#dedede"></div><div style="position:absolute;left:237px;top:457px;width:234px;height:1px;background:#e3e3e3"></div><svg style="position:absolute;left:266px;top:361px" width="18" height="14" viewBox="0 0 18 14"><path d="M2.2 4.2L4.6 2.6V12" fill="none" stroke="#e8000b" stroke-width="2"/><rect x="8" y="5" width="1.4" height="1.4" fill="#e8000b"/><rect x="8" y="9" width="1.4" height="1.4" fill="#e8000b"/><path d="M12.4 4.2L14.8 2.6V12" fill="none" stroke="#e8000b" stroke-width="2"/></svg><svg style="position:absolute;left:268.0px;top:384.5px" width="16" height="16" viewBox="0 0 16 16"><path d="M2 1.5l12 6.5-12 6.5z" fill="#3fa040" stroke="#2a7a2a" stroke-width="0.8"/></svg><div class="t" style="left:289.2px;top:358.77px;font-size:14.5px;line-height:19px;color:#3a3a3a;font-weight:400;letter-spacing:-0.069px;">Reset Chart</div><div class="t" style="left:289.2px;top:384.07px;font-size:14.5px;line-height:19px;color:#3a3a3a;font-weight:400;letter-spacing:-0.174px;">Set Chart Range</div><div class="t" style="left:267.3px;top:409.47px;font-size:14.5px;line-height:19px;color:#3a3a3a;font-weight:400;letter-spacing:0.220px;">Export Chart Selection</div><div class="t" style="left:267.3px;top:435.47px;font-size:14.5px;line-height:19px;color:#3a3a3a;font-weight:400;letter-spacing:-0.020px;">Range Selection</div><div class="t" style="left:267.3px;top:461.47px;font-size:14.5px;line-height:19px;color:#3a3a3a;font-weight:400;letter-spacing:0.343px;">Toggle Visibility</div><svg style="position:absolute;left:455.0px;top:412.5px" width="12" height="12" viewBox="0 0 16 16"><path d="M6 3l5 5-5 5" fill="none" stroke="#444" stroke-width="1.4"/></svg><svg style="position:absolute;left:455.0px;top:438.5px" width="12" height="12" viewBox="0 0 16 16"><path d="M6 3l5 5-5 5" fill="none" stroke="#444" stroke-width="1.4"/></svg><svg style="position:absolute;left:455.0px;top:464.5px" width="12" height="12" viewBox="0 0 16 16"><path d="M6 3l5 5-5 5" fill="none" stroke="#444" stroke-width="1.4"/></svg><div style="position:absolute;left:471px;top:401px;width:365px;height:335px;background:#fafafa;border:1px solid #bdbdbd;border-radius:7px;box-sizing:border-box;box-shadow:0 1px 3px rgba(0,0,0,0.25)"></div><div style="position:absolute;left:473px;top:531px;width:362px;height:24.5px;background:#dedede"></div><svg style="position:absolute;left:503.0px;top:411.1px" width="16" height="16" viewBox="0 0 16 16"><path d="M3.5 1.5h6.5l3 3v10h-9.5z" fill="#fff" stroke="#c0a060"/><text x="5.3" y="12" font-size="7.5" font-weight="700" font-family="Liberation Sans" fill="#2a5aa8">c</text></svg><div class="t" style="left:525.4px;top:409.57px;font-size:14.5px;line-height:19px;color:#3a3a3a;font-weight:400;letter-spacing:0.000px;">Comma Separated Values (*.csv)</div><svg style="position:absolute;left:503.0px;top:436.1px" width="16" height="16" viewBox="0 0 16 16"><rect x="1.5" y="2.5" width="13" height="12" fill="#fff" stroke="#445" stroke-width="1"/><path d="M2 14l5-7 3 4 2-2 2.5 5z" fill="#3a5a9a"/><circle cx="5" cy="5.5" r="1.3" fill="#f0c020"/></svg><div class="t" style="left:525.4px;top:434.57px;font-size:14.5px;line-height:19px;color:#3a3a3a;font-weight:400;letter-spacing:0.187px;">Copy Image to Clipboard</div><svg style="position:absolute;left:503.0px;top:461.1px" width="16" height="16" viewBox="0 0 16 16"><rect x="1.5" y="2.5" width="13" height="12" fill="#fff" stroke="#445" stroke-width="1"/><path d="M2 14l5-7 3 4 2-2 2.5 5z" fill="#3a5a9a"/><circle cx="5" cy="5.5" r="1.3" fill="#f0c020"/></svg><div class="t" style="left:525.4px;top:459.57px;font-size:14.5px;line-height:19px;color:#3a3a3a;font-weight:400;letter-spacing:0.134px;">Image (*.bmp)</div><svg style="position:absolute;left:503.0px;top:486.1px" width="16" height="16" viewBox="0 0 16 16"><rect x="1.5" y="2.5" width="13" height="12" fill="#fff" stroke="#445" stroke-width="1"/><path d="M2 14l5-7 3 4 2-2 2.5 5z" fill="#3a5a9a"/><circle cx="5" cy="5.5" r="1.3" fill="#f0c020"/></svg><div class="t" style="left:525.4px;top:484.57px;font-size:14.5px;line-height:19px;color:#3a3a3a;font-weight:400;letter-spacing:0.115px;">Image (*.jpg)</div><svg style="position:absolute;left:503.0px;top:511.1px" width="16" height="16" viewBox="0 0 16 16"><rect x="1.5" y="2.5" width="13" height="12" fill="#fff" stroke="#445" stroke-width="1"/><path d="M2 14l5-7 3 4 2-2 2.5 5z" fill="#3a5a9a"/><circle cx="5" cy="5.5" r="1.3" fill="#f0c020"/></svg><div class="t" style="left:525.4px;top:509.57px;font-size:14.5px;line-height:19px;color:#3a3a3a;font-weight:400;letter-spacing:0.058px;">Image (*.png)</div><svg style="position:absolute;left:503.0px;top:536.1px" width="16" height="16" viewBox="0 0 16 16"><path d="M3.5 1.5h6.5l3 3v10h-9.5z" fill="#fff" stroke="#c0a060"/><text x="4.8" y="12" font-size="8" font-family="Liberation Serif" fill="#3a4a8a">R</text></svg><div class="t" style="left:525.4px;top:534.57px;font-size:14.5px;line-height:19px;color:#3a3a3a;font-weight:400;letter-spacing:-0.096px;">Image R-Script (*.R)</div><svg style="position:absolute;left:503.0px;top:561.1px" width="16" height="16" viewBox="0 0 16 16"><path d="M3.5 1.5h6.5l3 3v10h-9.5z" fill="#fff" stroke="#c0a060"/><text x="4.8" y="12.5" font-size="9" font-weight="700" font-family="Liberation Sans" fill="#2a5aa8">T</text></svg><div class="t" style="left:525.4px;top:559.57px;font-size:14.5px;line-height:19px;color:#3a3a3a;font-weight:400;letter-spacing:0.014px;">LaTeX Table (*.tex)</div><svg style="position:absolute;left:503.0px;top:586.1px" width="16" height="16" viewBox="0 0 16 16"><rect x="4" y="1" width="8" height="6" fill="#fff" stroke="#a08040" stroke-width="0.8"/><rect x="1" y="7" width="14" height="7" rx="2" fill="#a8bedf" stroke="#5a7ab0" stroke-width="0.8"/><path d="M1.5 12h13" stroke="#7a96c8" stroke-width="1"/></svg><div class="t" style="left:525.4px;top:584.57px;font-size:14.5px;line-height:19px;color:#3a3a3a;font-weight:400;letter-spacing:0.457px;">Print</div><svg style="position:absolute;left:503.0px;top:611.1px" width="16" height="16" viewBox="0 0 16 16"><rect x="8" y="8" width="7" height="6" fill="#1a8ad8"/><path d="M2 12l5-6 4 6z" fill="#e02020"/><circle cx="4.5" cy="4" r="2.5" fill="none" stroke="#2a9a3a" stroke-width="1.2"/></svg><div class="t" style="left:525.4px;top:609.57px;font-size:14.5px;line-height:19px;color:#3a3a3a;font-weight:400;letter-spacing:0.131px;">Scalable Vector Graphic [Template] (*.svg)</div><div class="t" style="left:503.7px;top:634.57px;font-size:14.5px;line-height:19px;color:#3a3a3a;font-weight:400;letter-spacing:0.061px;">Tab Separated Values (*.tsv)</div><svg style="position:absolute;left:503.0px;top:661.1px" width="16" height="16" viewBox="0 0 16 16"><rect x="8" y="8" width="7" height="6" fill="#1a8ad8"/><path d="M2 12l5-6 4 6z" fill="#e02020"/><circle cx="4.5" cy="4" r="2.5" fill="none" stroke="#2a9a3a" stroke-width="1.2"/></svg><div class="t" style="left:525.4px;top:659.57px;font-size:14.5px;line-height:19px;color:#3a3a3a;font-weight:400;letter-spacing:-0.006px;">Vector Graphics 2D (*.eps)</div><svg style="position:absolute;left:503.0px;top:686.1px" width="16" height="16" viewBox="0 0 16 16"><rect x="1.5" y="1.5" width="13" height="13" fill="#fff" stroke="#e00" stroke-width="1.2"/><path d="M8 3c-1 3-2 6-4 9 3-1 6-1 8 0-2-2-3-5-4-9z" fill="none" stroke="#e00" stroke-width="1"/></svg><div class="t" style="left:525.4px;top:684.57px;font-size:14.5px;line-height:19px;color:#3a3a3a;font-weight:400;letter-spacing:0.157px;">Vector Graphics 2D (*.pdf)</div><svg style="position:absolute;left:503.0px;top:711.1px" width="16" height="16" viewBox="0 0 16 16"><rect x="8" y="8" width="7" height="6" fill="#1a8ad8"/><path d="M2 12l5-6 4 6z" fill="#e02020"/><circle cx="4.5" cy="4" r="2.5" fill="none" stroke="#2a9a3a" stroke-width="1.2"/></svg><div class="t" style="left:525.4px;top:709.57px;font-size:14.5px;line-height:19px;color:#3a3a3a;font-weight:400;letter-spacing:-0.055px;">Vector Graphics 2D (*.svg)</div><div style="position:absolute;left:1px;top:1145.0px;width:2px;height:2px;background:#b5ab9b"></div><div style="position:absolute;left:1px;top:1148.8px;width:2px;height:2px;background:#b5ab9b"></div><div style="position:absolute;left:1px;top:1152.6px;width:2px;height:2px;background:#b5ab9b"></div><div style="position:absolute;left:1px;top:1156.4px;width:2px;height:2px;background:#b5ab9b"></div><div style="position:absolute;left:0px;top:1167px;width:1920px;height:1px;background:#d6d6d6"></div><div style="position:absolute;left:1745px;top:1145.0px;width:2px;height:2px;background:#b5ab9b"></div><div style="position:absolute;left:1745px;top:1148.8px;width:2px;height:2px;background:#b5ab9b"></div><div style="position:absolute;left:1745px;top:1152.6px;width:2px;height:2px;background:#b5ab9b"></div><div style="position:absolute;left:1745px;top:1156.4px;width:2px;height:2px;background:#b5ab9b"></div><div style="position:absolute;left:1749px;top:1137px;width:171px;height:31px;background:#f6f5f4;border-top:1px solid #c8c8c8;border-left:1px solid #d0d0d0;box-sizing:border-box"></div><div style="position:absolute;left:1750px;top:1138px;width:152px;height:30px;background:#fafafa"></div><div style="position:absolute;left:1750px;top:1138px;width:81px;height:30px;background:#a3a3a3"></div><div style="position:absolute;left:1902px;top:1137px;width:1px;height:31px;background:#c8c8c8"></div><div class="t" style="left:1776.8px;top:1143.77px;font-size:14.5px;line-height:19px;color:#3a3a3a;font-weight:400;letter-spacing:0.057px;">757M of 1434M</div><svg style="position:absolute;left:1903.0px;top:1144.5px" width="16" height="16" viewBox="0 0 16 16"><path d="M3.2 4.5h9.6l-.9 10.5H4.1z" fill="#c8daf2" stroke="#3a6ab0" stroke-width="1"/><path d="M1.8 3.3h12.4" stroke="#3a6ab0" stroke-width="1.3"/><path d="M6 1.8h4" stroke="#3a6ab0" stroke-width="1.2"/><path d="M6.2 6v8M8 6v8M9.8 6v8" stroke="#3a6ab0" stroke-width="0.9"/></svg>
</body></html>
